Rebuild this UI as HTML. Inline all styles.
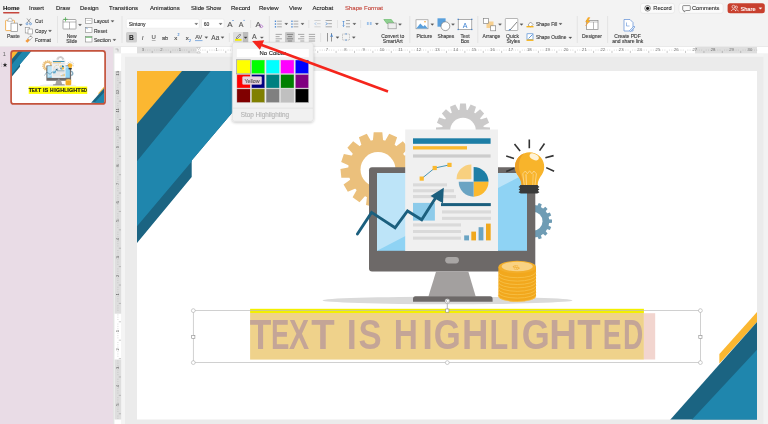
<!DOCTYPE html>
<html><head><meta charset="utf-8">
<style>
*{margin:0;padding:0;box-sizing:border-box}
html,body{width:768px;height:424px;overflow:hidden;background:#f3f3f3;font-family:"Liberation Sans",sans-serif}
svg{position:absolute;left:0;top:0;will-change:transform}
svg text{font-family:"Liberation Sans",sans-serif}
</style></head><body>
<svg width="768" height="424" viewBox="0 0 768 424">
<defs>
<filter id="sh" x="-20%" y="-20%" width="140%" height="140%"><feGaussianBlur in="SourceAlpha" stdDeviation="1.5"/><feOffset dy="1"/><feComponentTransfer><feFuncA type="linear" slope="0.25"/></feComponentTransfer><feMerge><feMergeNode/><feMergeNode in="SourceGraphic"/></feMerge></filter>
<clipPath id="slideclip"><rect x="137" y="71" width="620" height="348.5"/></clipPath>
</defs>
<rect x="0" y="0" width="768" height="46.3" fill="#f3f3f3"/>
<line x1="0" y1="46.5" x2="768" y2="46.5" stroke="#e0e0e0" stroke-width="0.6"/>
<text x="3" y="10" font-size="6" fill="#222" stroke="#222" stroke-width="0.12" font-weight="bold" text-anchor="start" >Home</text>
<text x="29" y="10" font-size="6" fill="#222" stroke="#222" stroke-width="0.12" font-weight="normal" text-anchor="start" >Insert</text>
<text x="56" y="10" font-size="6" fill="#222" stroke="#222" stroke-width="0.12" font-weight="normal" text-anchor="start" >Draw</text>
<text x="80" y="10" font-size="6" fill="#222" stroke="#222" stroke-width="0.12" font-weight="normal" text-anchor="start" >Design</text>
<text x="109" y="10" font-size="6" fill="#222" stroke="#222" stroke-width="0.12" font-weight="normal" text-anchor="start" >Transitions</text>
<text x="150" y="10" font-size="6" fill="#222" stroke="#222" stroke-width="0.12" font-weight="normal" text-anchor="start" >Animations</text>
<text x="191" y="10" font-size="6" fill="#222" stroke="#222" stroke-width="0.12" font-weight="normal" text-anchor="start" >Slide Show</text>
<text x="231" y="10" font-size="6" fill="#222" stroke="#222" stroke-width="0.12" font-weight="normal" text-anchor="start" >Record</text>
<text x="259" y="10" font-size="6" fill="#222" stroke="#222" stroke-width="0.12" font-weight="normal" text-anchor="start" >Review</text>
<text x="289" y="10" font-size="6" fill="#222" stroke="#222" stroke-width="0.12" font-weight="normal" text-anchor="start" >View</text>
<text x="312.5" y="10" font-size="6" fill="#222" stroke="#222" stroke-width="0.12" font-weight="normal" text-anchor="start" >Acrobat</text>
<text x="345" y="10" font-size="6" fill="#c4453a" stroke="#c4453a" stroke-width="0.12" font-weight="normal" text-anchor="start" >Shape Format</text>
<rect x="3" y="12" width="16.5" height="1.4" rx="0.7" fill="#c6463d"/>
<rect x="640.5" y="3.3" width="34" height="10" rx="2.5" fill="#fbfbfb" stroke="#dedede" stroke-width="0.5"/>
<circle cx="647.6" cy="8.3" r="2.8" fill="none" stroke="#333" stroke-width="0.6"/><circle cx="647.6" cy="8.3" r="1.6" fill="#111"/>
<text x="653.3" y="10.4" font-size="5.7" fill="#333" stroke="#333" stroke-width="0.12" font-weight="normal" text-anchor="start" >Record</text>
<rect x="679" y="3.3" width="44.2" height="10" rx="2.5" fill="#fbfbfb" stroke="#dedede" stroke-width="0.5"/>
<path d="M683.5,5.6 h6 a0.8,0.8 0 0 1 0.8,0.8 v3.3 a0.8,0.8 0 0 1 -0.8,0.8 h-3.6 l-1.8,1.5 v-1.5 h-0.6 a0.8,0.8 0 0 1 -0.8,-0.8 v-3.3 a0.8,0.8 0 0 1 0.8,-0.8 z" fill="none" stroke="#444" stroke-width="0.6"/>
<text x="691.9" y="10.4" font-size="5.7" fill="#333" stroke="#333" stroke-width="0.12" font-weight="normal" text-anchor="start" >Comments</text>
<rect x="727.6" y="3.3" width="37.2" height="10" rx="2.5" fill="#c8402e"/>
<circle cx="733.5" cy="6.8" r="1.5" fill="none" stroke="#fff" stroke-width="0.6"/><circle cx="736.3" cy="7.2" r="1.2" fill="none" stroke="#fff" stroke-width="0.6"/><path d="M731,11 q2.5,-3.4 5,0 M735,11 q1.8,-2.6 3.6,0" fill="none" stroke="#fff" stroke-width="0.6"/>
<text x="740.4" y="10.6" font-size="5.7" fill="#fff" stroke="#fff" stroke-width="0.12" font-weight="normal" text-anchor="start" >Share</text>
<polygon points="758.9,7.7 761.9,7.7 760.4,9.3" fill="#fff" stroke="#fff" stroke-width="0.3" stroke-linejoin="round"/>
<rect x="5.6" y="20.3" width="8.8" height="10.3" rx="0.6" fill="#fff" stroke="#f2b25a" stroke-width="1"/>
<path d="M7.6,21.3 l1.2,-3 h2.6 l1.2,3 z" fill="#fff" stroke="#999" stroke-width="0.6"/>
<rect x="11" y="23.1" width="6.4" height="8.4" fill="#fff" stroke="#8a8a8a" stroke-width="0.7"/>
<polygon points="19.2,24.3 22.2,24.3 20.7,25.9" fill="#555" stroke="#555" stroke-width="0.3" stroke-linejoin="round"/>
<text x="6.9" y="38.3" font-size="5" fill="#3a3a3a" stroke="#3a3a3a" stroke-width="0.12" font-weight="normal" text-anchor="start" >Paste</text>
<path d="M27,18.5 l3.5,4.5 M30.5,18.5 l-3.5,4.5" stroke="#666" stroke-width="0.6"/><circle cx="27" cy="23.8" r="1" fill="none" stroke="#3a7fd0" stroke-width="0.6"/><circle cx="30.5" cy="23.8" r="1" fill="none" stroke="#3a7fd0" stroke-width="0.6"/>
<text x="35" y="23.2" font-size="5" fill="#3a3a3a" stroke="#3a3a3a" stroke-width="0.12" font-weight="normal" text-anchor="start" >Cut</text>
<rect x="25.2" y="27.5" width="4.5" height="5.5" fill="#fff" stroke="#777" stroke-width="0.5"/><rect x="28" y="29" width="4.5" height="5" fill="#fff" stroke="#777" stroke-width="0.5"/>
<text x="35" y="32.5" font-size="5" fill="#3a3a3a" stroke="#3a3a3a" stroke-width="0.12" font-weight="normal" text-anchor="start" >Copy</text>
<polygon points="48.5,30.3 51.5,30.3 50,31.9" fill="#555" stroke="#555" stroke-width="0.3" stroke-linejoin="round"/>
<polygon points="25.4,41 27.3,42.8 29.8,40.2 28,38.4" fill="#f39a3c"/><polygon points="28,38.4 29.8,40.2 32.4,37.2 31.2,36 30.6,37 30.6,35.8 29.6,36.6" fill="#fff" stroke="#666" stroke-width="0.5"/>
<text x="35" y="42" font-size="5" fill="#3a3a3a" stroke="#3a3a3a" stroke-width="0.12" font-weight="normal" text-anchor="start" >Format</text>
<line x1="57.5" y1="16" x2="57.5" y2="43" stroke="#dcdcdc" stroke-width="0.7"/>
<rect x="63" y="19.5" width="13" height="9.5" rx="0.6" fill="#fff" stroke="#8a8a8a" stroke-width="0.7"/><line x1="69.5" y1="22" x2="69.5" y2="29" stroke="#8a8a8a" stroke-width="0.6"/><line x1="63" y1="22" x2="76" y2="22" stroke="#8a8a8a" stroke-width="0.6"/>
<path d="M65.5,17.2 v4.2 M63.4,19.3 h4.2" stroke="#4cae4f" stroke-width="0.8"/>
<polygon points="78.5,24.3 81.5,24.3 80,25.9" fill="#555" stroke="#555" stroke-width="0.3" stroke-linejoin="round"/>
<text x="71.7" y="38" font-size="5" fill="#3a3a3a" stroke="#3a3a3a" stroke-width="0.12" font-weight="normal" text-anchor="middle" >New</text>
<text x="71.7" y="43.2" font-size="5" fill="#3a3a3a" stroke="#3a3a3a" stroke-width="0.12" font-weight="normal" text-anchor="middle" >Slide</text>
<rect x="85.5" y="18.5" width="6.5" height="5" fill="#fff" stroke="#888" stroke-width="0.6"/><line x1="86.5" y1="20.5" x2="91" y2="20.5" stroke="#aaa" stroke-width="0.5"/>
<text x="94" y="23.3" font-size="5" fill="#3a3a3a" stroke="#3a3a3a" stroke-width="0.12" font-weight="normal" text-anchor="start" >Layout</text>
<polygon points="111.0,20.6 114.0,20.6 112.5,22.2" fill="#555" stroke="#555" stroke-width="0.3" stroke-linejoin="round"/>
<rect x="85.5" y="27.5" width="6.5" height="5" fill="#fff" stroke="#888" stroke-width="0.6"/><path d="M86.3,27.6 l1.2,1.6" stroke="#3a7fd0" stroke-width="0.7"/>
<text x="94" y="32.6" font-size="5" fill="#3a3a3a" stroke="#3a3a3a" stroke-width="0.12" font-weight="normal" text-anchor="start" >Reset</text>
<rect x="85.5" y="36.5" width="6.5" height="5.5" fill="#fff" stroke="#888" stroke-width="0.6"/><line x1="85.5" y1="37.2" x2="92" y2="37.2" stroke="#4cae4f" stroke-width="0.9"/>
<text x="94" y="42" font-size="5" fill="#3a3a3a" stroke="#3a3a3a" stroke-width="0.12" font-weight="normal" text-anchor="start" >Section</text>
<polygon points="112.9,39.3 115.9,39.3 114.4,40.9" fill="#555" stroke="#555" stroke-width="0.3" stroke-linejoin="round"/>
<line x1="122" y1="16" x2="122" y2="43" stroke="#dcdcdc" stroke-width="0.7"/>
<rect x="126.3" y="19" width="73" height="9.2" rx="1.2" fill="#fff" stroke="#e2e2e2" stroke-width="0.5"/>
<text x="128.8" y="25.6" font-size="5" fill="#333" stroke="#333" stroke-width="0.12" font-weight="normal" text-anchor="start" >Sintony</text>
<polygon points="194.8,23.3 197.8,23.3 196.3,24.9" fill="#666" stroke="#666" stroke-width="0.3" stroke-linejoin="round"/>
<rect x="201.5" y="19" width="22.5" height="9.2" rx="1.2" fill="#fff" stroke="#e2e2e2" stroke-width="0.5"/>
<text x="203.8" y="25.6" font-size="5" fill="#333" stroke="#333" stroke-width="0.12" font-weight="normal" text-anchor="start" >60</text>
<polygon points="219.1,23.3 222.1,23.3 220.6,24.9" fill="#666" stroke="#666" stroke-width="0.3" stroke-linejoin="round"/>
<text x="227.2" y="26.5" font-size="8" fill="#555" stroke="#555" stroke-width="0.12" font-weight="normal" text-anchor="start" >A</text>
<path d="M232,21 l1,-1 l1,1" stroke="#3a7fd0" stroke-width="0.5" fill="none"/>
<text x="238.7" y="26.5" font-size="7" fill="#555" stroke="#555" stroke-width="0.12" font-weight="normal" text-anchor="start" >A</text>
<path d="M243.2,20.4 h1.8" stroke="#3a7fd0" stroke-width="0.5"/>
<line x1="250.6" y1="20" x2="250.6" y2="28" stroke="#dcdcdc" stroke-width="0.7"/>
<text x="255.6" y="26.5" font-size="8" fill="#555" stroke="#555" stroke-width="0.12" font-weight="normal" text-anchor="start" >A</text>
<path d="M259.5,25 q2,-1 3.5,1.5 q-1.5,2 -3.5,0.5" fill="none" stroke="#a040c0" stroke-width="0.6"/>
<line x1="269.4" y1="16" x2="269.4" y2="43" stroke="#dcdcdc" stroke-width="0.7"/>
<rect x="126" y="32" width="11" height="10.6" rx="1.5" fill="#cfcfcf"/>
<text x="131.5" y="40" font-size="6.6" fill="#2a2a2a" stroke="#2a2a2a" stroke-width="0.12" font-weight="bold" text-anchor="middle" >B</text>
<text x="142.5" y="39.7" font-size="6" fill="#555" stroke="#555" stroke-width="0.12" font-weight="normal" text-anchor="middle" font-style="italic">I</text>
<text x="153.7" y="39.4" font-size="6" fill="#555" stroke="#555" stroke-width="0.12" font-weight="normal" text-anchor="middle" >U</text>
<line x1="151.8" y1="40.5" x2="155.6" y2="40.5" stroke="#555" stroke-width="0.4"/>
<text x="165" y="39.7" font-size="5.5" fill="#555" stroke="#555" stroke-width="0.12" font-weight="normal" text-anchor="middle" >ab</text>
<line x1="162" y1="37.6" x2="168" y2="37.6" stroke="#555" stroke-width="0.4"/>
<text x="175.8" y="39.7" font-size="6" fill="#333" stroke="#333" stroke-width="0.12" font-weight="normal" text-anchor="middle" >x</text>
<text x="178.5" y="36" font-size="3.5" fill="#3a7fd0" stroke="#3a7fd0" stroke-width="0.12" font-weight="normal" text-anchor="middle" >2</text>
<text x="187.3" y="39.7" font-size="6" fill="#333" stroke="#333" stroke-width="0.12" font-weight="normal" text-anchor="middle" >x</text>
<text x="190" y="41.5" font-size="3.5" fill="#3a7fd0" stroke="#3a7fd0" stroke-width="0.12" font-weight="normal" text-anchor="middle" >2</text>
<text x="198.6" y="38.5" font-size="5.5" fill="#555" stroke="#555" stroke-width="0.12" font-weight="normal" text-anchor="middle" >AV</text>
<path d="M195,40.6 h7.5" stroke="#3a7fd0" stroke-width="0.6"/>
<polygon points="204.8,36.8 207.8,36.8 206.3,38.4" fill="#555" stroke="#555" stroke-width="0.3" stroke-linejoin="round"/>
<text x="215.3" y="39.7" font-size="6.5" fill="#555" stroke="#555" stroke-width="0.12" font-weight="normal" text-anchor="middle" >Aa</text>
<polygon points="221.0,36.8 224.0,36.8 222.5,38.4" fill="#555" stroke="#555" stroke-width="0.3" stroke-linejoin="round"/>
<line x1="229.4" y1="33" x2="229.4" y2="42" stroke="#dcdcdc" stroke-width="0.7"/>
<rect x="233" y="32" width="15.2" height="10.6" rx="1.3" fill="#dedede"/>
<rect x="243" y="32" width="5.2" height="10.6" fill="#bdbdbd"/>
<path d="M236,38 l3.8,-4 l1,1 l-3.8,4 z" fill="none" stroke="#555" stroke-width="0.6"/>
<rect x="235" y="38.9" width="6.5" height="1.9" fill="#f5ef00"/>
<polygon points="244.1,36.9 247.1,36.9 245.6,38.5" fill="#3a3a3a" stroke="#3a3a3a" stroke-width="0.3" stroke-linejoin="round"/>
<text x="254.4" y="39.2" font-size="7" fill="#555" stroke="#555" stroke-width="0.12" font-weight="normal" text-anchor="middle" >A</text>
<polygon points="260.4,36.9 263.4,36.9 261.9,38.5" fill="#555" stroke="#555" stroke-width="0.3" stroke-linejoin="round"/>
<rect x="274.8" y="20.599999999999998" width="1.3" height="1.3" fill="#3a7fd0"/><line x1="277.1" y1="21.2" x2="281.8" y2="21.2" stroke="#777" stroke-width="0.6"/><rect x="274.8" y="23.4" width="1.3" height="1.3" fill="#3a7fd0"/><line x1="277.1" y1="24.0" x2="281.8" y2="24.0" stroke="#777" stroke-width="0.6"/><rect x="274.8" y="26.199999999999996" width="1.3" height="1.3" fill="#3a7fd0"/><line x1="277.1" y1="26.799999999999997" x2="281.8" y2="26.799999999999997" stroke="#777" stroke-width="0.6"/>
<polygon points="284.8,23.3 287.8,23.3 286.3,24.9" fill="#555" stroke="#555" stroke-width="0.3" stroke-linejoin="round"/>
<rect x="291.3" y="20.599999999999998" width="1.3" height="1.3" fill="#3a7fd0"/><line x1="293.6" y1="21.2" x2="298.3" y2="21.2" stroke="#777" stroke-width="0.6"/><rect x="291.3" y="23.4" width="1.3" height="1.3" fill="#3a7fd0"/><line x1="293.6" y1="24.0" x2="298.3" y2="24.0" stroke="#777" stroke-width="0.6"/><rect x="291.3" y="26.199999999999996" width="1.3" height="1.3" fill="#3a7fd0"/><line x1="293.6" y1="26.799999999999997" x2="298.3" y2="26.799999999999997" stroke="#777" stroke-width="0.6"/>
<polygon points="301.0,23.3 304.0,23.3 302.5,24.9" fill="#555" stroke="#555" stroke-width="0.3" stroke-linejoin="round"/>
<line x1="308.8" y1="20" x2="308.8" y2="28" stroke="#dcdcdc" stroke-width="0.7"/>
<g stroke="#bbb" stroke-width="0.6"><line x1="314.4" y1="20.5" x2="320.6" y2="20.5"/><line x1="317" y1="23.7" x2="320.6" y2="23.7"/><line x1="314.4" y1="26.8" x2="320.6" y2="26.8"/></g><path d="M316.5,22.5 l-2,1.2 l2,1.2" fill="none" stroke="#9cc0e8" stroke-width="0.6"/>
<g stroke="#777" stroke-width="0.6"><line x1="325.6" y1="20.5" x2="331.9" y2="20.5"/><line x1="328.2" y1="23.7" x2="331.9" y2="23.7"/><line x1="325.6" y1="26.8" x2="331.9" y2="26.8"/></g><path d="M325.6,22.5 l2,1.2 l-2,1.2" fill="none" stroke="#3a7fd0" stroke-width="0.6"/>
<line x1="337.5" y1="20" x2="337.5" y2="28" stroke="#dcdcdc" stroke-width="0.7"/>
<g stroke="#777" stroke-width="0.6"><line x1="346" y1="20.5" x2="350" y2="20.5"/><line x1="346" y1="23.7" x2="350" y2="23.7"/><line x1="346" y1="26.8" x2="350" y2="26.8"/></g><path d="M343.5,21 v5.5 M342.6,22 l0.9,-1 l0.9,1 M342.6,25.5 l0.9,1 l0.9,-1" fill="none" stroke="#3a7fd0" stroke-width="0.6"/>
<polygon points="352.9,23.3 355.9,23.3 354.4,24.9" fill="#555" stroke="#555" stroke-width="0.3" stroke-linejoin="round"/>
<line x1="360.6" y1="20" x2="360.6" y2="28" stroke="#dcdcdc" stroke-width="0.7"/>
<rect x="366.9" y="22" width="1.8" height="3" fill="#9cc0e8"/><rect x="369.8" y="22" width="1.8" height="3" fill="#9cc0e8"/>
<polygon points="375.4,23.3 378.4,23.3 376.9,24.9" fill="#555" stroke="#555" stroke-width="0.3" stroke-linejoin="round"/>
<line x1="275.6" y1="34.4" x2="281.90000000000003" y2="34.4" stroke="#777" stroke-width="0.6"/><line x1="275.6" y1="36.6" x2="279.6" y2="36.6" stroke="#777" stroke-width="0.6"/><line x1="275.6" y1="38.8" x2="281.90000000000003" y2="38.8" stroke="#777" stroke-width="0.6"/><line x1="275.6" y1="41.0" x2="279.6" y2="41.0" stroke="#777" stroke-width="0.6"/>
<rect x="285" y="32" width="9.8" height="10.6" rx="1.3" fill="#c9c9c9"/>
<line x1="286.8" y1="34.4" x2="293.1" y2="34.4" stroke="#555" stroke-width="0.6"/><line x1="287.8" y1="36.6" x2="292.1" y2="36.6" stroke="#555" stroke-width="0.6"/><line x1="286.8" y1="38.8" x2="293.1" y2="38.8" stroke="#555" stroke-width="0.6"/><line x1="287.8" y1="41.0" x2="292.1" y2="41.0" stroke="#555" stroke-width="0.6"/>
<line x1="298" y1="34.4" x2="304.3" y2="34.4" stroke="#777" stroke-width="0.6"/><line x1="300.3" y1="36.6" x2="304.3" y2="36.6" stroke="#777" stroke-width="0.6"/><line x1="298" y1="38.8" x2="304.3" y2="38.8" stroke="#777" stroke-width="0.6"/><line x1="300.3" y1="41.0" x2="304.3" y2="41.0" stroke="#777" stroke-width="0.6"/>
<line x1="308.8" y1="34.4" x2="315.1" y2="34.4" stroke="#777" stroke-width="0.6"/><line x1="308.8" y1="36.6" x2="315.1" y2="36.6" stroke="#777" stroke-width="0.6"/><line x1="308.8" y1="38.8" x2="315.1" y2="38.8" stroke="#777" stroke-width="0.6"/><line x1="308.8" y1="41.0" x2="315.1" y2="41.0" stroke="#777" stroke-width="0.6"/>
<line x1="320.6" y1="33" x2="320.6" y2="42" stroke="#dcdcdc" stroke-width="0.7"/>
<path d="M327.5,33 v8.5 M331.5,33 v8.5" stroke="#555" stroke-width="0.6"/><text x="331.5" y="37" font-size="4" fill="#3a7fd0" text-anchor="middle">A</text>
<polygon points="336.0,36.8 339.0,36.8 337.5,38.4" fill="#555" stroke="#555" stroke-width="0.3" stroke-linejoin="round"/>
<rect x="342.5" y="34" width="7" height="6" fill="none" stroke="#888" stroke-width="0.5" stroke-dasharray="1,0.7"/><path d="M346,33 v1.8 M346,39.2 v1.8" stroke="#3a7fd0" stroke-width="0.7"/>
<polygon points="352.3,36.8 355.3,36.8 353.8,38.4" fill="#555" stroke="#555" stroke-width="0.3" stroke-linejoin="round"/>
<path d="M383.8,19.5 h7.5 l3,4 h-7.5 z" fill="#8ed08f" stroke="#4cae4f" stroke-width="0.5"/>
<rect x="388" y="23" width="8.2" height="5.8" fill="#eee" stroke="#888" stroke-width="0.6"/>
<polygon points="398.5,23.8 401.5,23.8 400,25.4" fill="#555" stroke="#555" stroke-width="0.3" stroke-linejoin="round"/>
<text x="392.7" y="37.7" font-size="5" fill="#3a3a3a" stroke="#3a3a3a" stroke-width="0.12" font-weight="normal" text-anchor="middle" >Convert to</text>
<text x="392.7" y="43" font-size="5" fill="#3a3a3a" stroke="#3a3a3a" stroke-width="0.12" font-weight="normal" text-anchor="middle" >SmartArt</text>
<line x1="409.8" y1="16" x2="409.8" y2="43" stroke="#dcdcdc" stroke-width="0.7"/>
<rect x="416" y="19.8" width="12" height="9" fill="#fff" stroke="#888" stroke-width="0.6"/><path d="M416.3,28.5 l4,-5 l3,3 l1.5,-1.5 l3,3.5 z" fill="#5aa0dc"/><circle cx="425" cy="21.8" r="0.8" fill="#f0a030"/>
<polygon points="430.8,23.8 433.8,23.8 432.3,25.4" fill="#555" stroke="#555" stroke-width="0.3" stroke-linejoin="round"/>
<text x="424.4" y="37.7" font-size="5" fill="#3a3a3a" stroke="#3a3a3a" stroke-width="0.12" font-weight="normal" text-anchor="middle" >Picture</text>
<rect x="437.5" y="18.3" width="8.1" height="8.4" fill="#5aa0dc"/><circle cx="445.4" cy="26.2" r="4.4" fill="#fff" stroke="#666" stroke-width="0.6"/>
<polygon points="451.5,23.8 454.5,23.8 453,25.4" fill="#555" stroke="#555" stroke-width="0.3" stroke-linejoin="round"/>
<text x="445.9" y="37.7" font-size="5" fill="#3a3a3a" stroke="#3a3a3a" stroke-width="0.12" font-weight="normal" text-anchor="middle" >Shapes</text>
<rect x="458.2" y="19.3" width="13.6" height="10.2" fill="#fff" stroke="#777" stroke-width="0.6"/><text x="465" y="27.5" font-size="7" fill="#3a7fd0" text-anchor="middle">A</text>
<g fill="#3a7fd0"><rect x="457.6" y="18.7" width="1.2" height="1.2"/><rect x="471.2" y="18.7" width="1.2" height="1.2"/><rect x="457.6" y="28.9" width="1.2" height="1.2"/><rect x="471.2" y="28.9" width="1.2" height="1.2"/></g>
<text x="465" y="37.7" font-size="5" fill="#3a3a3a" stroke="#3a3a3a" stroke-width="0.12" font-weight="normal" text-anchor="middle" >Text</text>
<text x="465" y="43" font-size="5" fill="#3a3a3a" stroke="#3a3a3a" stroke-width="0.12" font-weight="normal" text-anchor="middle" >Box</text>
<line x1="477.8" y1="16" x2="477.8" y2="43" stroke="#dcdcdc" stroke-width="0.7"/>
<rect x="486.5" y="21.5" width="7" height="6.5" fill="#f7d08f"/><rect x="483.3" y="18.5" width="5" height="5" fill="#fff" stroke="#777" stroke-width="0.6"/><rect x="490.7" y="25.8" width="5" height="5" fill="#fff" stroke="#777" stroke-width="0.6"/>
<polygon points="498.5,23.8 501.5,23.8 500,25.4" fill="#555" stroke="#555" stroke-width="0.3" stroke-linejoin="round"/>
<text x="491.5" y="37.7" font-size="5" fill="#3a3a3a" stroke="#3a3a3a" stroke-width="0.12" font-weight="normal" text-anchor="middle" >Arrange</text>
<rect x="505.3" y="18.5" width="12.5" height="12" rx="0.8" fill="#fff" stroke="#888" stroke-width="0.6"/><path d="M510,30 l7,-8" stroke="#666" stroke-width="0.8"/><path d="M508.5,30.5 q0.5,-2 2.2,-1.5 q-0.2,1.5 -2.2,1.5z" fill="#3a7fd0"/>
<polygon points="520.0,23.8 523.0,23.8 521.5,25.4" fill="#555" stroke="#555" stroke-width="0.3" stroke-linejoin="round"/>
<text x="512.5" y="37.7" font-size="5" fill="#3a3a3a" stroke="#3a3a3a" stroke-width="0.12" font-weight="normal" text-anchor="middle" >Quick</text>
<text x="513.3" y="43" font-size="5" fill="#3a3a3a" stroke="#3a3a3a" stroke-width="0.12" font-weight="normal" text-anchor="middle" >Styles</text>
<path d="M528,25 l2.5,-3 l2.5,2.5 l-2.5,2.5 z" fill="#fff" stroke="#555" stroke-width="0.5"/><rect x="526.5" y="26" width="7" height="1.4" fill="#f6b31b"/>
<text x="536" y="25.7" font-size="4.8" fill="#3a3a3a" stroke="#3a3a3a" stroke-width="0.12" font-weight="normal" text-anchor="start" >Shape Fill</text>
<polygon points="559.0,23.3 562.0,23.3 560.5,24.9" fill="#555" stroke="#555" stroke-width="0.3" stroke-linejoin="round"/>
<rect x="527" y="33.8" width="6" height="5.5" fill="#fff" stroke="#3a7fd0" stroke-width="0.6"/><path d="M528.5,38.5 l4,-4" stroke="#3a7fd0" stroke-width="0.8"/><rect x="526.5" y="39.5" width="7" height="1.4" fill="#f6b31b"/>
<text x="536" y="39.4" font-size="4.8" fill="#3a3a3a" stroke="#3a3a3a" stroke-width="0.12" font-weight="normal" text-anchor="start" >Shape Outline</text>
<polygon points="568.8,37.099999999999994 571.8,37.099999999999994 570.3,38.699999999999996" fill="#555" stroke="#555" stroke-width="0.3" stroke-linejoin="round"/>
<line x1="577.3" y1="16" x2="577.3" y2="43" stroke="#dcdcdc" stroke-width="0.7"/>
<rect x="586.5" y="20.5" width="11.5" height="9" fill="#fff" stroke="#888" stroke-width="0.7"/><line x1="593.5" y1="22" x2="593.5" y2="29" stroke="#888" stroke-width="0.6"/><line x1="586.5" y1="22" x2="598" y2="22" stroke="#888" stroke-width="0.5"/>
<path d="M588,17.5 l-2.5,4.5 h2 l-2,4 l4.5,-5 h-2 l2,-3.5 z" fill="#f6b31b" stroke="#f08a3c" stroke-width="0.3"/>
<text x="592" y="37.7" font-size="5" fill="#3a3a3a" stroke="#3a3a3a" stroke-width="0.12" font-weight="normal" text-anchor="middle" >Designer</text>
<line x1="607.6" y1="16" x2="607.6" y2="43" stroke="#dcdcdc" stroke-width="0.7"/>
<path d="M624,19.5 h6 l3,3 v8.5 h-9 z" fill="#fff" stroke="#5b8dd6" stroke-width="0.7"/><path d="M626.5,22.5 v3.5 h3" fill="none" stroke="#5b8dd6" stroke-width="0.6"/><path d="M629.5,30.5 l4.5,-4.5 l1,1 l-4.5,4.5 z" fill="#dfe9f7" stroke="#5b8dd6" stroke-width="0.6"/>
<text x="627.5" y="37.7" font-size="5" fill="#3a3a3a" stroke="#3a3a3a" stroke-width="0.12" font-weight="normal" text-anchor="middle" >Create PDF</text>
<text x="627.8" y="43" font-size="5" fill="#3a3a3a" stroke="#3a3a3a" stroke-width="0.12" font-weight="normal" text-anchor="middle" >and share link</text>
<rect x="0" y="46.8" width="113" height="378" fill="#e9dce6"/>
<rect x="113" y="46.8" width="1.6" height="378" fill="#e4e4e4"/>
<rect x="114.6" y="46.8" width="654" height="378" fill="#ebebeb"/>
<rect x="121.2" y="53.4" width="647" height="3.4" fill="#f4f4f4"/>
<rect x="121.2" y="53.4" width="3.8" height="371" fill="#f4f4f4"/>
<rect x="763.4" y="53.4" width="5" height="371" fill="#f2f2f2"/>
<rect x="121" y="47" width="647" height="6.4" fill="#fff"/>
<rect x="137" y="47" width="59.7" height="6.4" fill="#dedede"/>
<rect x="695" y="47" width="62" height="6.4" fill="#dedede"/>
<text x="143.03" y="50.7" font-size="4.2" fill="#6a6a6a" text-anchor="middle">3</text>
<line x1="145.33" y1="49.6" x2="145.33" y2="50.6" stroke="#aaa" stroke-width="0.45"/>
<line x1="147.63" y1="49.6" x2="147.63" y2="50.6" stroke="#aaa" stroke-width="0.45"/>
<line x1="149.93" y1="49.6" x2="149.93" y2="50.6" stroke="#aaa" stroke-width="0.45"/>
<line x1="152.22" y1="50.8" x2="152.22" y2="53" stroke="#888" stroke-width="0.45"/>
<line x1="154.52" y1="49.6" x2="154.52" y2="50.6" stroke="#aaa" stroke-width="0.45"/>
<line x1="156.82" y1="49.6" x2="156.82" y2="50.6" stroke="#aaa" stroke-width="0.45"/>
<line x1="159.12" y1="49.6" x2="159.12" y2="50.6" stroke="#aaa" stroke-width="0.45"/>
<text x="161.42" y="50.7" font-size="4.2" fill="#6a6a6a" text-anchor="middle">2</text>
<line x1="163.72" y1="49.6" x2="163.72" y2="50.6" stroke="#aaa" stroke-width="0.45"/>
<line x1="166.02" y1="49.6" x2="166.02" y2="50.6" stroke="#aaa" stroke-width="0.45"/>
<line x1="168.32" y1="49.6" x2="168.32" y2="50.6" stroke="#aaa" stroke-width="0.45"/>
<line x1="170.61" y1="50.8" x2="170.61" y2="53" stroke="#888" stroke-width="0.45"/>
<line x1="172.91" y1="49.6" x2="172.91" y2="50.6" stroke="#aaa" stroke-width="0.45"/>
<line x1="175.21" y1="49.6" x2="175.21" y2="50.6" stroke="#aaa" stroke-width="0.45"/>
<line x1="177.51" y1="49.6" x2="177.51" y2="50.6" stroke="#aaa" stroke-width="0.45"/>
<text x="179.81" y="50.7" font-size="4.2" fill="#6a6a6a" text-anchor="middle">1</text>
<line x1="182.11" y1="49.6" x2="182.11" y2="50.6" stroke="#aaa" stroke-width="0.45"/>
<line x1="184.41" y1="49.6" x2="184.41" y2="50.6" stroke="#aaa" stroke-width="0.45"/>
<line x1="186.71" y1="49.6" x2="186.71" y2="50.6" stroke="#aaa" stroke-width="0.45"/>
<line x1="189.00" y1="50.8" x2="189.00" y2="53" stroke="#888" stroke-width="0.45"/>
<line x1="191.30" y1="49.6" x2="191.30" y2="50.6" stroke="#aaa" stroke-width="0.45"/>
<line x1="193.60" y1="49.6" x2="193.60" y2="50.6" stroke="#aaa" stroke-width="0.45"/>
<line x1="195.90" y1="49.6" x2="195.90" y2="50.6" stroke="#aaa" stroke-width="0.45"/>
<line x1="200.50" y1="49.6" x2="200.50" y2="50.6" stroke="#aaa" stroke-width="0.45"/>
<line x1="202.80" y1="49.6" x2="202.80" y2="50.6" stroke="#aaa" stroke-width="0.45"/>
<line x1="205.10" y1="49.6" x2="205.10" y2="50.6" stroke="#aaa" stroke-width="0.45"/>
<line x1="207.39" y1="50.8" x2="207.39" y2="53" stroke="#888" stroke-width="0.45"/>
<line x1="209.69" y1="49.6" x2="209.69" y2="50.6" stroke="#aaa" stroke-width="0.45"/>
<line x1="211.99" y1="49.6" x2="211.99" y2="50.6" stroke="#aaa" stroke-width="0.45"/>
<line x1="214.29" y1="49.6" x2="214.29" y2="50.6" stroke="#aaa" stroke-width="0.45"/>
<text x="216.59" y="50.7" font-size="4.2" fill="#6a6a6a" text-anchor="middle">1</text>
<line x1="218.89" y1="49.6" x2="218.89" y2="50.6" stroke="#aaa" stroke-width="0.45"/>
<line x1="221.19" y1="49.6" x2="221.19" y2="50.6" stroke="#aaa" stroke-width="0.45"/>
<line x1="223.49" y1="49.6" x2="223.49" y2="50.6" stroke="#aaa" stroke-width="0.45"/>
<line x1="225.78" y1="50.8" x2="225.78" y2="53" stroke="#888" stroke-width="0.45"/>
<line x1="228.08" y1="49.6" x2="228.08" y2="50.6" stroke="#aaa" stroke-width="0.45"/>
<line x1="230.38" y1="49.6" x2="230.38" y2="50.6" stroke="#aaa" stroke-width="0.45"/>
<line x1="232.68" y1="49.6" x2="232.68" y2="50.6" stroke="#aaa" stroke-width="0.45"/>
<text x="234.98" y="50.7" font-size="4.2" fill="#6a6a6a" text-anchor="middle">2</text>
<line x1="237.28" y1="49.6" x2="237.28" y2="50.6" stroke="#aaa" stroke-width="0.45"/>
<line x1="239.58" y1="49.6" x2="239.58" y2="50.6" stroke="#aaa" stroke-width="0.45"/>
<line x1="241.88" y1="49.6" x2="241.88" y2="50.6" stroke="#aaa" stroke-width="0.45"/>
<line x1="244.17" y1="50.8" x2="244.17" y2="53" stroke="#888" stroke-width="0.45"/>
<line x1="246.47" y1="49.6" x2="246.47" y2="50.6" stroke="#aaa" stroke-width="0.45"/>
<line x1="248.77" y1="49.6" x2="248.77" y2="50.6" stroke="#aaa" stroke-width="0.45"/>
<line x1="251.07" y1="49.6" x2="251.07" y2="50.6" stroke="#aaa" stroke-width="0.45"/>
<text x="253.37" y="50.7" font-size="4.2" fill="#6a6a6a" text-anchor="middle">3</text>
<line x1="255.67" y1="49.6" x2="255.67" y2="50.6" stroke="#aaa" stroke-width="0.45"/>
<line x1="257.97" y1="49.6" x2="257.97" y2="50.6" stroke="#aaa" stroke-width="0.45"/>
<line x1="260.27" y1="49.6" x2="260.27" y2="50.6" stroke="#aaa" stroke-width="0.45"/>
<line x1="262.56" y1="50.8" x2="262.56" y2="53" stroke="#888" stroke-width="0.45"/>
<line x1="264.86" y1="49.6" x2="264.86" y2="50.6" stroke="#aaa" stroke-width="0.45"/>
<line x1="267.16" y1="49.6" x2="267.16" y2="50.6" stroke="#aaa" stroke-width="0.45"/>
<line x1="269.46" y1="49.6" x2="269.46" y2="50.6" stroke="#aaa" stroke-width="0.45"/>
<text x="271.76" y="50.7" font-size="4.2" fill="#6a6a6a" text-anchor="middle">4</text>
<line x1="274.06" y1="49.6" x2="274.06" y2="50.6" stroke="#aaa" stroke-width="0.45"/>
<line x1="276.36" y1="49.6" x2="276.36" y2="50.6" stroke="#aaa" stroke-width="0.45"/>
<line x1="278.66" y1="49.6" x2="278.66" y2="50.6" stroke="#aaa" stroke-width="0.45"/>
<line x1="280.95" y1="50.8" x2="280.95" y2="53" stroke="#888" stroke-width="0.45"/>
<line x1="283.25" y1="49.6" x2="283.25" y2="50.6" stroke="#aaa" stroke-width="0.45"/>
<line x1="285.55" y1="49.6" x2="285.55" y2="50.6" stroke="#aaa" stroke-width="0.45"/>
<line x1="287.85" y1="49.6" x2="287.85" y2="50.6" stroke="#aaa" stroke-width="0.45"/>
<text x="290.15" y="50.7" font-size="4.2" fill="#6a6a6a" text-anchor="middle">5</text>
<line x1="292.45" y1="49.6" x2="292.45" y2="50.6" stroke="#aaa" stroke-width="0.45"/>
<line x1="294.75" y1="49.6" x2="294.75" y2="50.6" stroke="#aaa" stroke-width="0.45"/>
<line x1="297.05" y1="49.6" x2="297.05" y2="50.6" stroke="#aaa" stroke-width="0.45"/>
<line x1="299.34" y1="50.8" x2="299.34" y2="53" stroke="#888" stroke-width="0.45"/>
<line x1="301.64" y1="49.6" x2="301.64" y2="50.6" stroke="#aaa" stroke-width="0.45"/>
<line x1="303.94" y1="49.6" x2="303.94" y2="50.6" stroke="#aaa" stroke-width="0.45"/>
<line x1="306.24" y1="49.6" x2="306.24" y2="50.6" stroke="#aaa" stroke-width="0.45"/>
<text x="308.54" y="50.7" font-size="4.2" fill="#6a6a6a" text-anchor="middle">6</text>
<line x1="310.84" y1="49.6" x2="310.84" y2="50.6" stroke="#aaa" stroke-width="0.45"/>
<line x1="313.14" y1="49.6" x2="313.14" y2="50.6" stroke="#aaa" stroke-width="0.45"/>
<line x1="315.44" y1="49.6" x2="315.44" y2="50.6" stroke="#aaa" stroke-width="0.45"/>
<line x1="317.73" y1="50.8" x2="317.73" y2="53" stroke="#888" stroke-width="0.45"/>
<line x1="320.03" y1="49.6" x2="320.03" y2="50.6" stroke="#aaa" stroke-width="0.45"/>
<line x1="322.33" y1="49.6" x2="322.33" y2="50.6" stroke="#aaa" stroke-width="0.45"/>
<line x1="324.63" y1="49.6" x2="324.63" y2="50.6" stroke="#aaa" stroke-width="0.45"/>
<text x="326.93" y="50.7" font-size="4.2" fill="#6a6a6a" text-anchor="middle">7</text>
<line x1="329.23" y1="49.6" x2="329.23" y2="50.6" stroke="#aaa" stroke-width="0.45"/>
<line x1="331.53" y1="49.6" x2="331.53" y2="50.6" stroke="#aaa" stroke-width="0.45"/>
<line x1="333.83" y1="49.6" x2="333.83" y2="50.6" stroke="#aaa" stroke-width="0.45"/>
<line x1="336.12" y1="50.8" x2="336.12" y2="53" stroke="#888" stroke-width="0.45"/>
<line x1="338.42" y1="49.6" x2="338.42" y2="50.6" stroke="#aaa" stroke-width="0.45"/>
<line x1="340.72" y1="49.6" x2="340.72" y2="50.6" stroke="#aaa" stroke-width="0.45"/>
<line x1="343.02" y1="49.6" x2="343.02" y2="50.6" stroke="#aaa" stroke-width="0.45"/>
<text x="345.32" y="50.7" font-size="4.2" fill="#6a6a6a" text-anchor="middle">8</text>
<line x1="347.62" y1="49.6" x2="347.62" y2="50.6" stroke="#aaa" stroke-width="0.45"/>
<line x1="349.92" y1="49.6" x2="349.92" y2="50.6" stroke="#aaa" stroke-width="0.45"/>
<line x1="352.22" y1="49.6" x2="352.22" y2="50.6" stroke="#aaa" stroke-width="0.45"/>
<line x1="354.51" y1="50.8" x2="354.51" y2="53" stroke="#888" stroke-width="0.45"/>
<line x1="356.81" y1="49.6" x2="356.81" y2="50.6" stroke="#aaa" stroke-width="0.45"/>
<line x1="359.11" y1="49.6" x2="359.11" y2="50.6" stroke="#aaa" stroke-width="0.45"/>
<line x1="361.41" y1="49.6" x2="361.41" y2="50.6" stroke="#aaa" stroke-width="0.45"/>
<text x="363.71" y="50.7" font-size="4.2" fill="#6a6a6a" text-anchor="middle">9</text>
<line x1="366.01" y1="49.6" x2="366.01" y2="50.6" stroke="#aaa" stroke-width="0.45"/>
<line x1="368.31" y1="49.6" x2="368.31" y2="50.6" stroke="#aaa" stroke-width="0.45"/>
<line x1="370.61" y1="49.6" x2="370.61" y2="50.6" stroke="#aaa" stroke-width="0.45"/>
<line x1="372.90" y1="50.8" x2="372.90" y2="53" stroke="#888" stroke-width="0.45"/>
<line x1="375.20" y1="49.6" x2="375.20" y2="50.6" stroke="#aaa" stroke-width="0.45"/>
<line x1="377.50" y1="49.6" x2="377.50" y2="50.6" stroke="#aaa" stroke-width="0.45"/>
<line x1="379.80" y1="49.6" x2="379.80" y2="50.6" stroke="#aaa" stroke-width="0.45"/>
<text x="382.10" y="50.7" font-size="4.2" fill="#6a6a6a" text-anchor="middle">10</text>
<line x1="384.40" y1="49.6" x2="384.40" y2="50.6" stroke="#aaa" stroke-width="0.45"/>
<line x1="386.70" y1="49.6" x2="386.70" y2="50.6" stroke="#aaa" stroke-width="0.45"/>
<line x1="389.00" y1="49.6" x2="389.00" y2="50.6" stroke="#aaa" stroke-width="0.45"/>
<line x1="391.30" y1="50.8" x2="391.30" y2="53" stroke="#888" stroke-width="0.45"/>
<line x1="393.59" y1="49.6" x2="393.59" y2="50.6" stroke="#aaa" stroke-width="0.45"/>
<line x1="395.89" y1="49.6" x2="395.89" y2="50.6" stroke="#aaa" stroke-width="0.45"/>
<line x1="398.19" y1="49.6" x2="398.19" y2="50.6" stroke="#aaa" stroke-width="0.45"/>
<text x="400.49" y="50.7" font-size="4.2" fill="#6a6a6a" text-anchor="middle">11</text>
<line x1="402.79" y1="49.6" x2="402.79" y2="50.6" stroke="#aaa" stroke-width="0.45"/>
<line x1="405.09" y1="49.6" x2="405.09" y2="50.6" stroke="#aaa" stroke-width="0.45"/>
<line x1="407.39" y1="49.6" x2="407.39" y2="50.6" stroke="#aaa" stroke-width="0.45"/>
<line x1="409.69" y1="50.8" x2="409.69" y2="53" stroke="#888" stroke-width="0.45"/>
<line x1="411.98" y1="49.6" x2="411.98" y2="50.6" stroke="#aaa" stroke-width="0.45"/>
<line x1="414.28" y1="49.6" x2="414.28" y2="50.6" stroke="#aaa" stroke-width="0.45"/>
<line x1="416.58" y1="49.6" x2="416.58" y2="50.6" stroke="#aaa" stroke-width="0.45"/>
<text x="418.88" y="50.7" font-size="4.2" fill="#6a6a6a" text-anchor="middle">12</text>
<line x1="421.18" y1="49.6" x2="421.18" y2="50.6" stroke="#aaa" stroke-width="0.45"/>
<line x1="423.48" y1="49.6" x2="423.48" y2="50.6" stroke="#aaa" stroke-width="0.45"/>
<line x1="425.78" y1="49.6" x2="425.78" y2="50.6" stroke="#aaa" stroke-width="0.45"/>
<line x1="428.07" y1="50.8" x2="428.07" y2="53" stroke="#888" stroke-width="0.45"/>
<line x1="430.37" y1="49.6" x2="430.37" y2="50.6" stroke="#aaa" stroke-width="0.45"/>
<line x1="432.67" y1="49.6" x2="432.67" y2="50.6" stroke="#aaa" stroke-width="0.45"/>
<line x1="434.97" y1="49.6" x2="434.97" y2="50.6" stroke="#aaa" stroke-width="0.45"/>
<text x="437.27" y="50.7" font-size="4.2" fill="#6a6a6a" text-anchor="middle">13</text>
<line x1="439.57" y1="49.6" x2="439.57" y2="50.6" stroke="#aaa" stroke-width="0.45"/>
<line x1="441.87" y1="49.6" x2="441.87" y2="50.6" stroke="#aaa" stroke-width="0.45"/>
<line x1="444.17" y1="49.6" x2="444.17" y2="50.6" stroke="#aaa" stroke-width="0.45"/>
<line x1="446.46" y1="50.8" x2="446.46" y2="53" stroke="#888" stroke-width="0.45"/>
<line x1="448.76" y1="49.6" x2="448.76" y2="50.6" stroke="#aaa" stroke-width="0.45"/>
<line x1="451.06" y1="49.6" x2="451.06" y2="50.6" stroke="#aaa" stroke-width="0.45"/>
<line x1="453.36" y1="49.6" x2="453.36" y2="50.6" stroke="#aaa" stroke-width="0.45"/>
<text x="455.66" y="50.7" font-size="4.2" fill="#6a6a6a" text-anchor="middle">14</text>
<line x1="457.96" y1="49.6" x2="457.96" y2="50.6" stroke="#aaa" stroke-width="0.45"/>
<line x1="460.26" y1="49.6" x2="460.26" y2="50.6" stroke="#aaa" stroke-width="0.45"/>
<line x1="462.56" y1="49.6" x2="462.56" y2="50.6" stroke="#aaa" stroke-width="0.45"/>
<line x1="464.86" y1="50.8" x2="464.86" y2="53" stroke="#888" stroke-width="0.45"/>
<line x1="467.15" y1="49.6" x2="467.15" y2="50.6" stroke="#aaa" stroke-width="0.45"/>
<line x1="469.45" y1="49.6" x2="469.45" y2="50.6" stroke="#aaa" stroke-width="0.45"/>
<line x1="471.75" y1="49.6" x2="471.75" y2="50.6" stroke="#aaa" stroke-width="0.45"/>
<text x="474.05" y="50.7" font-size="4.2" fill="#6a6a6a" text-anchor="middle">15</text>
<line x1="476.35" y1="49.6" x2="476.35" y2="50.6" stroke="#aaa" stroke-width="0.45"/>
<line x1="478.65" y1="49.6" x2="478.65" y2="50.6" stroke="#aaa" stroke-width="0.45"/>
<line x1="480.95" y1="49.6" x2="480.95" y2="50.6" stroke="#aaa" stroke-width="0.45"/>
<line x1="483.25" y1="50.8" x2="483.25" y2="53" stroke="#888" stroke-width="0.45"/>
<line x1="485.54" y1="49.6" x2="485.54" y2="50.6" stroke="#aaa" stroke-width="0.45"/>
<line x1="487.84" y1="49.6" x2="487.84" y2="50.6" stroke="#aaa" stroke-width="0.45"/>
<line x1="490.14" y1="49.6" x2="490.14" y2="50.6" stroke="#aaa" stroke-width="0.45"/>
<text x="492.44" y="50.7" font-size="4.2" fill="#6a6a6a" text-anchor="middle">16</text>
<line x1="494.74" y1="49.6" x2="494.74" y2="50.6" stroke="#aaa" stroke-width="0.45"/>
<line x1="497.04" y1="49.6" x2="497.04" y2="50.6" stroke="#aaa" stroke-width="0.45"/>
<line x1="499.34" y1="49.6" x2="499.34" y2="50.6" stroke="#aaa" stroke-width="0.45"/>
<line x1="501.63" y1="50.8" x2="501.63" y2="53" stroke="#888" stroke-width="0.45"/>
<line x1="503.93" y1="49.6" x2="503.93" y2="50.6" stroke="#aaa" stroke-width="0.45"/>
<line x1="506.23" y1="49.6" x2="506.23" y2="50.6" stroke="#aaa" stroke-width="0.45"/>
<line x1="508.53" y1="49.6" x2="508.53" y2="50.6" stroke="#aaa" stroke-width="0.45"/>
<text x="510.83" y="50.7" font-size="4.2" fill="#6a6a6a" text-anchor="middle">17</text>
<line x1="513.13" y1="49.6" x2="513.13" y2="50.6" stroke="#aaa" stroke-width="0.45"/>
<line x1="515.43" y1="49.6" x2="515.43" y2="50.6" stroke="#aaa" stroke-width="0.45"/>
<line x1="517.73" y1="49.6" x2="517.73" y2="50.6" stroke="#aaa" stroke-width="0.45"/>
<line x1="520.02" y1="50.8" x2="520.02" y2="53" stroke="#888" stroke-width="0.45"/>
<line x1="522.32" y1="49.6" x2="522.32" y2="50.6" stroke="#aaa" stroke-width="0.45"/>
<line x1="524.62" y1="49.6" x2="524.62" y2="50.6" stroke="#aaa" stroke-width="0.45"/>
<line x1="526.92" y1="49.6" x2="526.92" y2="50.6" stroke="#aaa" stroke-width="0.45"/>
<text x="529.22" y="50.7" font-size="4.2" fill="#6a6a6a" text-anchor="middle">18</text>
<line x1="531.52" y1="49.6" x2="531.52" y2="50.6" stroke="#aaa" stroke-width="0.45"/>
<line x1="533.82" y1="49.6" x2="533.82" y2="50.6" stroke="#aaa" stroke-width="0.45"/>
<line x1="536.12" y1="49.6" x2="536.12" y2="50.6" stroke="#aaa" stroke-width="0.45"/>
<line x1="538.42" y1="50.8" x2="538.42" y2="53" stroke="#888" stroke-width="0.45"/>
<line x1="540.71" y1="49.6" x2="540.71" y2="50.6" stroke="#aaa" stroke-width="0.45"/>
<line x1="543.01" y1="49.6" x2="543.01" y2="50.6" stroke="#aaa" stroke-width="0.45"/>
<line x1="545.31" y1="49.6" x2="545.31" y2="50.6" stroke="#aaa" stroke-width="0.45"/>
<text x="547.61" y="50.7" font-size="4.2" fill="#6a6a6a" text-anchor="middle">19</text>
<line x1="549.91" y1="49.6" x2="549.91" y2="50.6" stroke="#aaa" stroke-width="0.45"/>
<line x1="552.21" y1="49.6" x2="552.21" y2="50.6" stroke="#aaa" stroke-width="0.45"/>
<line x1="554.51" y1="49.6" x2="554.51" y2="50.6" stroke="#aaa" stroke-width="0.45"/>
<line x1="556.81" y1="50.8" x2="556.81" y2="53" stroke="#888" stroke-width="0.45"/>
<line x1="559.10" y1="49.6" x2="559.10" y2="50.6" stroke="#aaa" stroke-width="0.45"/>
<line x1="561.40" y1="49.6" x2="561.40" y2="50.6" stroke="#aaa" stroke-width="0.45"/>
<line x1="563.70" y1="49.6" x2="563.70" y2="50.6" stroke="#aaa" stroke-width="0.45"/>
<text x="566.00" y="50.7" font-size="4.2" fill="#6a6a6a" text-anchor="middle">20</text>
<line x1="568.30" y1="49.6" x2="568.30" y2="50.6" stroke="#aaa" stroke-width="0.45"/>
<line x1="570.60" y1="49.6" x2="570.60" y2="50.6" stroke="#aaa" stroke-width="0.45"/>
<line x1="572.90" y1="49.6" x2="572.90" y2="50.6" stroke="#aaa" stroke-width="0.45"/>
<line x1="575.20" y1="50.8" x2="575.20" y2="53" stroke="#888" stroke-width="0.45"/>
<line x1="577.49" y1="49.6" x2="577.49" y2="50.6" stroke="#aaa" stroke-width="0.45"/>
<line x1="579.79" y1="49.6" x2="579.79" y2="50.6" stroke="#aaa" stroke-width="0.45"/>
<line x1="582.09" y1="49.6" x2="582.09" y2="50.6" stroke="#aaa" stroke-width="0.45"/>
<text x="584.39" y="50.7" font-size="4.2" fill="#6a6a6a" text-anchor="middle">21</text>
<line x1="586.69" y1="49.6" x2="586.69" y2="50.6" stroke="#aaa" stroke-width="0.45"/>
<line x1="588.99" y1="49.6" x2="588.99" y2="50.6" stroke="#aaa" stroke-width="0.45"/>
<line x1="591.29" y1="49.6" x2="591.29" y2="50.6" stroke="#aaa" stroke-width="0.45"/>
<line x1="593.59" y1="50.8" x2="593.59" y2="53" stroke="#888" stroke-width="0.45"/>
<line x1="595.88" y1="49.6" x2="595.88" y2="50.6" stroke="#aaa" stroke-width="0.45"/>
<line x1="598.18" y1="49.6" x2="598.18" y2="50.6" stroke="#aaa" stroke-width="0.45"/>
<line x1="600.48" y1="49.6" x2="600.48" y2="50.6" stroke="#aaa" stroke-width="0.45"/>
<text x="602.78" y="50.7" font-size="4.2" fill="#6a6a6a" text-anchor="middle">22</text>
<line x1="605.08" y1="49.6" x2="605.08" y2="50.6" stroke="#aaa" stroke-width="0.45"/>
<line x1="607.38" y1="49.6" x2="607.38" y2="50.6" stroke="#aaa" stroke-width="0.45"/>
<line x1="609.68" y1="49.6" x2="609.68" y2="50.6" stroke="#aaa" stroke-width="0.45"/>
<line x1="611.98" y1="50.8" x2="611.98" y2="53" stroke="#888" stroke-width="0.45"/>
<line x1="614.27" y1="49.6" x2="614.27" y2="50.6" stroke="#aaa" stroke-width="0.45"/>
<line x1="616.57" y1="49.6" x2="616.57" y2="50.6" stroke="#aaa" stroke-width="0.45"/>
<line x1="618.87" y1="49.6" x2="618.87" y2="50.6" stroke="#aaa" stroke-width="0.45"/>
<text x="621.17" y="50.7" font-size="4.2" fill="#6a6a6a" text-anchor="middle">23</text>
<line x1="623.47" y1="49.6" x2="623.47" y2="50.6" stroke="#aaa" stroke-width="0.45"/>
<line x1="625.77" y1="49.6" x2="625.77" y2="50.6" stroke="#aaa" stroke-width="0.45"/>
<line x1="628.07" y1="49.6" x2="628.07" y2="50.6" stroke="#aaa" stroke-width="0.45"/>
<line x1="630.37" y1="50.8" x2="630.37" y2="53" stroke="#888" stroke-width="0.45"/>
<line x1="632.66" y1="49.6" x2="632.66" y2="50.6" stroke="#aaa" stroke-width="0.45"/>
<line x1="634.96" y1="49.6" x2="634.96" y2="50.6" stroke="#aaa" stroke-width="0.45"/>
<line x1="637.26" y1="49.6" x2="637.26" y2="50.6" stroke="#aaa" stroke-width="0.45"/>
<text x="639.56" y="50.7" font-size="4.2" fill="#6a6a6a" text-anchor="middle">24</text>
<line x1="641.86" y1="49.6" x2="641.86" y2="50.6" stroke="#aaa" stroke-width="0.45"/>
<line x1="644.16" y1="49.6" x2="644.16" y2="50.6" stroke="#aaa" stroke-width="0.45"/>
<line x1="646.46" y1="49.6" x2="646.46" y2="50.6" stroke="#aaa" stroke-width="0.45"/>
<line x1="648.75" y1="50.8" x2="648.75" y2="53" stroke="#888" stroke-width="0.45"/>
<line x1="651.05" y1="49.6" x2="651.05" y2="50.6" stroke="#aaa" stroke-width="0.45"/>
<line x1="653.35" y1="49.6" x2="653.35" y2="50.6" stroke="#aaa" stroke-width="0.45"/>
<line x1="655.65" y1="49.6" x2="655.65" y2="50.6" stroke="#aaa" stroke-width="0.45"/>
<text x="657.95" y="50.7" font-size="4.2" fill="#6a6a6a" text-anchor="middle">25</text>
<line x1="660.25" y1="49.6" x2="660.25" y2="50.6" stroke="#aaa" stroke-width="0.45"/>
<line x1="662.55" y1="49.6" x2="662.55" y2="50.6" stroke="#aaa" stroke-width="0.45"/>
<line x1="664.85" y1="49.6" x2="664.85" y2="50.6" stroke="#aaa" stroke-width="0.45"/>
<line x1="667.15" y1="50.8" x2="667.15" y2="53" stroke="#888" stroke-width="0.45"/>
<line x1="669.44" y1="49.6" x2="669.44" y2="50.6" stroke="#aaa" stroke-width="0.45"/>
<line x1="671.74" y1="49.6" x2="671.74" y2="50.6" stroke="#aaa" stroke-width="0.45"/>
<line x1="674.04" y1="49.6" x2="674.04" y2="50.6" stroke="#aaa" stroke-width="0.45"/>
<text x="676.34" y="50.7" font-size="4.2" fill="#6a6a6a" text-anchor="middle">26</text>
<line x1="678.64" y1="49.6" x2="678.64" y2="50.6" stroke="#aaa" stroke-width="0.45"/>
<line x1="680.94" y1="49.6" x2="680.94" y2="50.6" stroke="#aaa" stroke-width="0.45"/>
<line x1="683.24" y1="49.6" x2="683.24" y2="50.6" stroke="#aaa" stroke-width="0.45"/>
<line x1="685.53" y1="50.8" x2="685.53" y2="53" stroke="#888" stroke-width="0.45"/>
<line x1="687.83" y1="49.6" x2="687.83" y2="50.6" stroke="#aaa" stroke-width="0.45"/>
<line x1="690.13" y1="49.6" x2="690.13" y2="50.6" stroke="#aaa" stroke-width="0.45"/>
<line x1="692.43" y1="49.6" x2="692.43" y2="50.6" stroke="#aaa" stroke-width="0.45"/>
<text x="694.73" y="50.7" font-size="4.2" fill="#6a6a6a" text-anchor="middle">27</text>
<line x1="697.03" y1="49.6" x2="697.03" y2="50.6" stroke="#aaa" stroke-width="0.45"/>
<line x1="699.33" y1="49.6" x2="699.33" y2="50.6" stroke="#aaa" stroke-width="0.45"/>
<line x1="701.63" y1="49.6" x2="701.63" y2="50.6" stroke="#aaa" stroke-width="0.45"/>
<line x1="703.93" y1="50.8" x2="703.93" y2="53" stroke="#888" stroke-width="0.45"/>
<line x1="706.22" y1="49.6" x2="706.22" y2="50.6" stroke="#aaa" stroke-width="0.45"/>
<line x1="708.52" y1="49.6" x2="708.52" y2="50.6" stroke="#aaa" stroke-width="0.45"/>
<line x1="710.82" y1="49.6" x2="710.82" y2="50.6" stroke="#aaa" stroke-width="0.45"/>
<text x="713.12" y="50.7" font-size="4.2" fill="#6a6a6a" text-anchor="middle">28</text>
<line x1="715.42" y1="49.6" x2="715.42" y2="50.6" stroke="#aaa" stroke-width="0.45"/>
<line x1="717.72" y1="49.6" x2="717.72" y2="50.6" stroke="#aaa" stroke-width="0.45"/>
<line x1="720.02" y1="49.6" x2="720.02" y2="50.6" stroke="#aaa" stroke-width="0.45"/>
<line x1="722.32" y1="50.8" x2="722.32" y2="53" stroke="#888" stroke-width="0.45"/>
<line x1="724.61" y1="49.6" x2="724.61" y2="50.6" stroke="#aaa" stroke-width="0.45"/>
<line x1="726.91" y1="49.6" x2="726.91" y2="50.6" stroke="#aaa" stroke-width="0.45"/>
<line x1="729.21" y1="49.6" x2="729.21" y2="50.6" stroke="#aaa" stroke-width="0.45"/>
<text x="731.51" y="50.7" font-size="4.2" fill="#6a6a6a" text-anchor="middle">29</text>
<line x1="733.81" y1="49.6" x2="733.81" y2="50.6" stroke="#aaa" stroke-width="0.45"/>
<line x1="736.11" y1="49.6" x2="736.11" y2="50.6" stroke="#aaa" stroke-width="0.45"/>
<line x1="738.41" y1="49.6" x2="738.41" y2="50.6" stroke="#aaa" stroke-width="0.45"/>
<line x1="740.71" y1="50.8" x2="740.71" y2="53" stroke="#888" stroke-width="0.45"/>
<line x1="743.00" y1="49.6" x2="743.00" y2="50.6" stroke="#aaa" stroke-width="0.45"/>
<line x1="745.30" y1="49.6" x2="745.30" y2="50.6" stroke="#aaa" stroke-width="0.45"/>
<line x1="747.60" y1="49.6" x2="747.60" y2="50.6" stroke="#aaa" stroke-width="0.45"/>
<text x="749.90" y="50.7" font-size="4.2" fill="#6a6a6a" text-anchor="middle">30</text>
<line x1="752.20" y1="49.6" x2="752.20" y2="50.6" stroke="#aaa" stroke-width="0.45"/>
<line x1="754.50" y1="49.6" x2="754.50" y2="50.6" stroke="#aaa" stroke-width="0.45"/>
<line x1="756.80" y1="49.6" x2="756.80" y2="50.6" stroke="#aaa" stroke-width="0.45"/>
<path d="M196.8,47.5 h3.6 l-1.8,2.2 z M196.8,53 h3.6 l-1.8,-2.2 z" fill="#fff" stroke="#888" stroke-width="0.4"/>
<rect x="114.6" y="53.4" width="6.6" height="371" fill="#fff"/>
<rect x="114.6" y="71" width="6.6" height="242.7" fill="#dedede"/>
<rect x="114.6" y="359.5" width="6.6" height="60" fill="#dedede"/>
<line x1="117.4" y1="71.23" x2="118.4" y2="71.23" stroke="#aaa" stroke-width="0.45"/>
<text x="0" y="0" font-size="4.2" fill="#555" text-anchor="middle" transform="translate(119,73.53) rotate(-90)">13</text>
<line x1="117.4" y1="75.83" x2="118.4" y2="75.83" stroke="#aaa" stroke-width="0.45"/>
<line x1="117.4" y1="78.13" x2="118.4" y2="78.13" stroke="#aaa" stroke-width="0.45"/>
<line x1="117.4" y1="80.43" x2="118.4" y2="80.43" stroke="#aaa" stroke-width="0.45"/>
<line x1="118.8" y1="82.73" x2="121" y2="82.73" stroke="#888" stroke-width="0.45"/>
<line x1="117.4" y1="85.02" x2="118.4" y2="85.02" stroke="#aaa" stroke-width="0.45"/>
<line x1="117.4" y1="87.32" x2="118.4" y2="87.32" stroke="#aaa" stroke-width="0.45"/>
<line x1="117.4" y1="89.62" x2="118.4" y2="89.62" stroke="#aaa" stroke-width="0.45"/>
<text x="0" y="0" font-size="4.2" fill="#555" text-anchor="middle" transform="translate(119,91.92) rotate(-90)">12</text>
<line x1="117.4" y1="94.22" x2="118.4" y2="94.22" stroke="#aaa" stroke-width="0.45"/>
<line x1="117.4" y1="96.52" x2="118.4" y2="96.52" stroke="#aaa" stroke-width="0.45"/>
<line x1="117.4" y1="98.82" x2="118.4" y2="98.82" stroke="#aaa" stroke-width="0.45"/>
<line x1="118.8" y1="101.12" x2="121" y2="101.12" stroke="#888" stroke-width="0.45"/>
<line x1="117.4" y1="103.41" x2="118.4" y2="103.41" stroke="#aaa" stroke-width="0.45"/>
<line x1="117.4" y1="105.71" x2="118.4" y2="105.71" stroke="#aaa" stroke-width="0.45"/>
<line x1="117.4" y1="108.01" x2="118.4" y2="108.01" stroke="#aaa" stroke-width="0.45"/>
<text x="0" y="0" font-size="4.2" fill="#555" text-anchor="middle" transform="translate(119,110.31) rotate(-90)">11</text>
<line x1="117.4" y1="112.61" x2="118.4" y2="112.61" stroke="#aaa" stroke-width="0.45"/>
<line x1="117.4" y1="114.91" x2="118.4" y2="114.91" stroke="#aaa" stroke-width="0.45"/>
<line x1="117.4" y1="117.21" x2="118.4" y2="117.21" stroke="#aaa" stroke-width="0.45"/>
<line x1="118.8" y1="119.50" x2="121" y2="119.50" stroke="#888" stroke-width="0.45"/>
<line x1="117.4" y1="121.80" x2="118.4" y2="121.80" stroke="#aaa" stroke-width="0.45"/>
<line x1="117.4" y1="124.10" x2="118.4" y2="124.10" stroke="#aaa" stroke-width="0.45"/>
<line x1="117.4" y1="126.40" x2="118.4" y2="126.40" stroke="#aaa" stroke-width="0.45"/>
<text x="0" y="0" font-size="4.2" fill="#555" text-anchor="middle" transform="translate(119,128.70) rotate(-90)">10</text>
<line x1="117.4" y1="131.00" x2="118.4" y2="131.00" stroke="#aaa" stroke-width="0.45"/>
<line x1="117.4" y1="133.30" x2="118.4" y2="133.30" stroke="#aaa" stroke-width="0.45"/>
<line x1="117.4" y1="135.60" x2="118.4" y2="135.60" stroke="#aaa" stroke-width="0.45"/>
<line x1="118.8" y1="137.90" x2="121" y2="137.90" stroke="#888" stroke-width="0.45"/>
<line x1="117.4" y1="140.19" x2="118.4" y2="140.19" stroke="#aaa" stroke-width="0.45"/>
<line x1="117.4" y1="142.49" x2="118.4" y2="142.49" stroke="#aaa" stroke-width="0.45"/>
<line x1="117.4" y1="144.79" x2="118.4" y2="144.79" stroke="#aaa" stroke-width="0.45"/>
<text x="0" y="0" font-size="4.2" fill="#555" text-anchor="middle" transform="translate(119,147.09) rotate(-90)">9</text>
<line x1="117.4" y1="149.39" x2="118.4" y2="149.39" stroke="#aaa" stroke-width="0.45"/>
<line x1="117.4" y1="151.69" x2="118.4" y2="151.69" stroke="#aaa" stroke-width="0.45"/>
<line x1="117.4" y1="153.99" x2="118.4" y2="153.99" stroke="#aaa" stroke-width="0.45"/>
<line x1="118.8" y1="156.29" x2="121" y2="156.29" stroke="#888" stroke-width="0.45"/>
<line x1="117.4" y1="158.58" x2="118.4" y2="158.58" stroke="#aaa" stroke-width="0.45"/>
<line x1="117.4" y1="160.88" x2="118.4" y2="160.88" stroke="#aaa" stroke-width="0.45"/>
<line x1="117.4" y1="163.18" x2="118.4" y2="163.18" stroke="#aaa" stroke-width="0.45"/>
<text x="0" y="0" font-size="4.2" fill="#555" text-anchor="middle" transform="translate(119,165.48) rotate(-90)">8</text>
<line x1="117.4" y1="167.78" x2="118.4" y2="167.78" stroke="#aaa" stroke-width="0.45"/>
<line x1="117.4" y1="170.08" x2="118.4" y2="170.08" stroke="#aaa" stroke-width="0.45"/>
<line x1="117.4" y1="172.38" x2="118.4" y2="172.38" stroke="#aaa" stroke-width="0.45"/>
<line x1="118.8" y1="174.68" x2="121" y2="174.68" stroke="#888" stroke-width="0.45"/>
<line x1="117.4" y1="176.97" x2="118.4" y2="176.97" stroke="#aaa" stroke-width="0.45"/>
<line x1="117.4" y1="179.27" x2="118.4" y2="179.27" stroke="#aaa" stroke-width="0.45"/>
<line x1="117.4" y1="181.57" x2="118.4" y2="181.57" stroke="#aaa" stroke-width="0.45"/>
<text x="0" y="0" font-size="4.2" fill="#555" text-anchor="middle" transform="translate(119,183.87) rotate(-90)">7</text>
<line x1="117.4" y1="186.17" x2="118.4" y2="186.17" stroke="#aaa" stroke-width="0.45"/>
<line x1="117.4" y1="188.47" x2="118.4" y2="188.47" stroke="#aaa" stroke-width="0.45"/>
<line x1="117.4" y1="190.77" x2="118.4" y2="190.77" stroke="#aaa" stroke-width="0.45"/>
<line x1="118.8" y1="193.06" x2="121" y2="193.06" stroke="#888" stroke-width="0.45"/>
<line x1="117.4" y1="195.36" x2="118.4" y2="195.36" stroke="#aaa" stroke-width="0.45"/>
<line x1="117.4" y1="197.66" x2="118.4" y2="197.66" stroke="#aaa" stroke-width="0.45"/>
<line x1="117.4" y1="199.96" x2="118.4" y2="199.96" stroke="#aaa" stroke-width="0.45"/>
<text x="0" y="0" font-size="4.2" fill="#555" text-anchor="middle" transform="translate(119,202.26) rotate(-90)">6</text>
<line x1="117.4" y1="204.56" x2="118.4" y2="204.56" stroke="#aaa" stroke-width="0.45"/>
<line x1="117.4" y1="206.86" x2="118.4" y2="206.86" stroke="#aaa" stroke-width="0.45"/>
<line x1="117.4" y1="209.16" x2="118.4" y2="209.16" stroke="#aaa" stroke-width="0.45"/>
<line x1="118.8" y1="211.46" x2="121" y2="211.46" stroke="#888" stroke-width="0.45"/>
<line x1="117.4" y1="213.75" x2="118.4" y2="213.75" stroke="#aaa" stroke-width="0.45"/>
<line x1="117.4" y1="216.05" x2="118.4" y2="216.05" stroke="#aaa" stroke-width="0.45"/>
<line x1="117.4" y1="218.35" x2="118.4" y2="218.35" stroke="#aaa" stroke-width="0.45"/>
<text x="0" y="0" font-size="4.2" fill="#555" text-anchor="middle" transform="translate(119,220.65) rotate(-90)">5</text>
<line x1="117.4" y1="222.95" x2="118.4" y2="222.95" stroke="#aaa" stroke-width="0.45"/>
<line x1="117.4" y1="225.25" x2="118.4" y2="225.25" stroke="#aaa" stroke-width="0.45"/>
<line x1="117.4" y1="227.55" x2="118.4" y2="227.55" stroke="#aaa" stroke-width="0.45"/>
<line x1="118.8" y1="229.85" x2="121" y2="229.85" stroke="#888" stroke-width="0.45"/>
<line x1="117.4" y1="232.14" x2="118.4" y2="232.14" stroke="#aaa" stroke-width="0.45"/>
<line x1="117.4" y1="234.44" x2="118.4" y2="234.44" stroke="#aaa" stroke-width="0.45"/>
<line x1="117.4" y1="236.74" x2="118.4" y2="236.74" stroke="#aaa" stroke-width="0.45"/>
<text x="0" y="0" font-size="4.2" fill="#555" text-anchor="middle" transform="translate(119,239.04) rotate(-90)">4</text>
<line x1="117.4" y1="241.34" x2="118.4" y2="241.34" stroke="#aaa" stroke-width="0.45"/>
<line x1="117.4" y1="243.64" x2="118.4" y2="243.64" stroke="#aaa" stroke-width="0.45"/>
<line x1="117.4" y1="245.94" x2="118.4" y2="245.94" stroke="#aaa" stroke-width="0.45"/>
<line x1="118.8" y1="248.24" x2="121" y2="248.24" stroke="#888" stroke-width="0.45"/>
<line x1="117.4" y1="250.53" x2="118.4" y2="250.53" stroke="#aaa" stroke-width="0.45"/>
<line x1="117.4" y1="252.83" x2="118.4" y2="252.83" stroke="#aaa" stroke-width="0.45"/>
<line x1="117.4" y1="255.13" x2="118.4" y2="255.13" stroke="#aaa" stroke-width="0.45"/>
<text x="0" y="0" font-size="4.2" fill="#555" text-anchor="middle" transform="translate(119,257.43) rotate(-90)">3</text>
<line x1="117.4" y1="259.73" x2="118.4" y2="259.73" stroke="#aaa" stroke-width="0.45"/>
<line x1="117.4" y1="262.03" x2="118.4" y2="262.03" stroke="#aaa" stroke-width="0.45"/>
<line x1="117.4" y1="264.33" x2="118.4" y2="264.33" stroke="#aaa" stroke-width="0.45"/>
<line x1="118.8" y1="266.62" x2="121" y2="266.62" stroke="#888" stroke-width="0.45"/>
<line x1="117.4" y1="268.92" x2="118.4" y2="268.92" stroke="#aaa" stroke-width="0.45"/>
<line x1="117.4" y1="271.22" x2="118.4" y2="271.22" stroke="#aaa" stroke-width="0.45"/>
<line x1="117.4" y1="273.52" x2="118.4" y2="273.52" stroke="#aaa" stroke-width="0.45"/>
<text x="0" y="0" font-size="4.2" fill="#555" text-anchor="middle" transform="translate(119,275.82) rotate(-90)">2</text>
<line x1="117.4" y1="278.12" x2="118.4" y2="278.12" stroke="#aaa" stroke-width="0.45"/>
<line x1="117.4" y1="280.42" x2="118.4" y2="280.42" stroke="#aaa" stroke-width="0.45"/>
<line x1="117.4" y1="282.72" x2="118.4" y2="282.72" stroke="#aaa" stroke-width="0.45"/>
<line x1="118.8" y1="285.02" x2="121" y2="285.02" stroke="#888" stroke-width="0.45"/>
<line x1="117.4" y1="287.31" x2="118.4" y2="287.31" stroke="#aaa" stroke-width="0.45"/>
<line x1="117.4" y1="289.61" x2="118.4" y2="289.61" stroke="#aaa" stroke-width="0.45"/>
<line x1="117.4" y1="291.91" x2="118.4" y2="291.91" stroke="#aaa" stroke-width="0.45"/>
<text x="0" y="0" font-size="4.2" fill="#555" text-anchor="middle" transform="translate(119,294.21) rotate(-90)">1</text>
<line x1="117.4" y1="296.51" x2="118.4" y2="296.51" stroke="#aaa" stroke-width="0.45"/>
<line x1="117.4" y1="298.81" x2="118.4" y2="298.81" stroke="#aaa" stroke-width="0.45"/>
<line x1="117.4" y1="301.11" x2="118.4" y2="301.11" stroke="#aaa" stroke-width="0.45"/>
<line x1="118.8" y1="303.41" x2="121" y2="303.41" stroke="#888" stroke-width="0.45"/>
<line x1="117.4" y1="305.70" x2="118.4" y2="305.70" stroke="#aaa" stroke-width="0.45"/>
<line x1="117.4" y1="308.00" x2="118.4" y2="308.00" stroke="#aaa" stroke-width="0.45"/>
<line x1="117.4" y1="310.30" x2="118.4" y2="310.30" stroke="#aaa" stroke-width="0.45"/>
<line x1="117.4" y1="314.90" x2="118.4" y2="314.90" stroke="#aaa" stroke-width="0.45"/>
<line x1="117.4" y1="317.20" x2="118.4" y2="317.20" stroke="#aaa" stroke-width="0.45"/>
<line x1="117.4" y1="319.50" x2="118.4" y2="319.50" stroke="#aaa" stroke-width="0.45"/>
<line x1="118.8" y1="321.80" x2="121" y2="321.80" stroke="#888" stroke-width="0.45"/>
<line x1="117.4" y1="324.09" x2="118.4" y2="324.09" stroke="#aaa" stroke-width="0.45"/>
<line x1="117.4" y1="326.39" x2="118.4" y2="326.39" stroke="#aaa" stroke-width="0.45"/>
<line x1="117.4" y1="328.69" x2="118.4" y2="328.69" stroke="#aaa" stroke-width="0.45"/>
<text x="0" y="0" font-size="4.2" fill="#555" text-anchor="middle" transform="translate(119,330.99) rotate(-90)">1</text>
<line x1="117.4" y1="333.29" x2="118.4" y2="333.29" stroke="#aaa" stroke-width="0.45"/>
<line x1="117.4" y1="335.59" x2="118.4" y2="335.59" stroke="#aaa" stroke-width="0.45"/>
<line x1="117.4" y1="337.89" x2="118.4" y2="337.89" stroke="#aaa" stroke-width="0.45"/>
<line x1="118.8" y1="340.19" x2="121" y2="340.19" stroke="#888" stroke-width="0.45"/>
<line x1="117.4" y1="342.48" x2="118.4" y2="342.48" stroke="#aaa" stroke-width="0.45"/>
<line x1="117.4" y1="344.78" x2="118.4" y2="344.78" stroke="#aaa" stroke-width="0.45"/>
<line x1="117.4" y1="347.08" x2="118.4" y2="347.08" stroke="#aaa" stroke-width="0.45"/>
<text x="0" y="0" font-size="4.2" fill="#555" text-anchor="middle" transform="translate(119,349.38) rotate(-90)">2</text>
<line x1="117.4" y1="351.68" x2="118.4" y2="351.68" stroke="#aaa" stroke-width="0.45"/>
<line x1="117.4" y1="353.98" x2="118.4" y2="353.98" stroke="#aaa" stroke-width="0.45"/>
<line x1="117.4" y1="356.28" x2="118.4" y2="356.28" stroke="#aaa" stroke-width="0.45"/>
<line x1="118.8" y1="358.57" x2="121" y2="358.57" stroke="#888" stroke-width="0.45"/>
<line x1="117.4" y1="360.87" x2="118.4" y2="360.87" stroke="#aaa" stroke-width="0.45"/>
<line x1="117.4" y1="363.17" x2="118.4" y2="363.17" stroke="#aaa" stroke-width="0.45"/>
<line x1="117.4" y1="365.47" x2="118.4" y2="365.47" stroke="#aaa" stroke-width="0.45"/>
<text x="0" y="0" font-size="4.2" fill="#555" text-anchor="middle" transform="translate(119,367.77) rotate(-90)">3</text>
<line x1="117.4" y1="370.07" x2="118.4" y2="370.07" stroke="#aaa" stroke-width="0.45"/>
<line x1="117.4" y1="372.37" x2="118.4" y2="372.37" stroke="#aaa" stroke-width="0.45"/>
<line x1="117.4" y1="374.67" x2="118.4" y2="374.67" stroke="#aaa" stroke-width="0.45"/>
<line x1="118.8" y1="376.97" x2="121" y2="376.97" stroke="#888" stroke-width="0.45"/>
<line x1="117.4" y1="379.26" x2="118.4" y2="379.26" stroke="#aaa" stroke-width="0.45"/>
<line x1="117.4" y1="381.56" x2="118.4" y2="381.56" stroke="#aaa" stroke-width="0.45"/>
<line x1="117.4" y1="383.86" x2="118.4" y2="383.86" stroke="#aaa" stroke-width="0.45"/>
<text x="0" y="0" font-size="4.2" fill="#555" text-anchor="middle" transform="translate(119,386.16) rotate(-90)">4</text>
<line x1="117.4" y1="388.46" x2="118.4" y2="388.46" stroke="#aaa" stroke-width="0.45"/>
<line x1="117.4" y1="390.76" x2="118.4" y2="390.76" stroke="#aaa" stroke-width="0.45"/>
<line x1="117.4" y1="393.06" x2="118.4" y2="393.06" stroke="#aaa" stroke-width="0.45"/>
<line x1="118.8" y1="395.36" x2="121" y2="395.36" stroke="#888" stroke-width="0.45"/>
<line x1="117.4" y1="397.65" x2="118.4" y2="397.65" stroke="#aaa" stroke-width="0.45"/>
<line x1="117.4" y1="399.95" x2="118.4" y2="399.95" stroke="#aaa" stroke-width="0.45"/>
<line x1="117.4" y1="402.25" x2="118.4" y2="402.25" stroke="#aaa" stroke-width="0.45"/>
<text x="0" y="0" font-size="4.2" fill="#555" text-anchor="middle" transform="translate(119,404.55) rotate(-90)">5</text>
<line x1="117.4" y1="406.85" x2="118.4" y2="406.85" stroke="#aaa" stroke-width="0.45"/>
<line x1="117.4" y1="409.15" x2="118.4" y2="409.15" stroke="#aaa" stroke-width="0.45"/>
<line x1="117.4" y1="411.45" x2="118.4" y2="411.45" stroke="#aaa" stroke-width="0.45"/>
<line x1="118.8" y1="413.75" x2="121" y2="413.75" stroke="#888" stroke-width="0.45"/>
<line x1="117.4" y1="416.04" x2="118.4" y2="416.04" stroke="#aaa" stroke-width="0.45"/>
<line x1="117.4" y1="418.34" x2="118.4" y2="418.34" stroke="#aaa" stroke-width="0.45"/>
<path d="M115.5,49 h2.5 v2.5" fill="none" stroke="#888" stroke-width="0.5"/>
<g id="thumb">
<rect x="11" y="50.8" width="94.2" height="53.2" rx="2.5" fill="#fff"/>
<svg x="11.9" y="51.1" width="92.15" height="51.7" viewBox="137 71 620 348.5" preserveAspectRatio="none">
<polygon points="137,71 267.6,71 191.7,160.4 191.7,177 137,243" fill="#1b6482"/>
<polygon points="137,71 182,71 137,124" fill="#fbb731"/>
<polygon points="210.7,71 267.6,71 191.7,160.4 191.7,161.5 137,226.3 137,161.2" fill="#1f86ad"/>
<polygon points="719.4,354 757,312 757,322 719.4,363.5" fill="#fbb731"/>
<polygon points="670,420 757,322 757,420" fill="#1b6482"/>
<polygon points="691.6,420 757,349.7 757,420" fill="#1f86ad"/>
<g fill="#ebc07c"><circle cx="378" cy="169.5" r="29.8"/><polygon points="372.80,141.20 373.70,132.20 382.30,132.20 383.20,141.20" transform="rotate(0.00 378 169.5)"/><polygon points="372.80,141.20 373.70,132.20 382.30,132.20 383.20,141.20" transform="rotate(24.00 378 169.5)"/><polygon points="372.80,141.20 373.70,132.20 382.30,132.20 383.20,141.20" transform="rotate(48.00 378 169.5)"/><polygon points="372.80,141.20 373.70,132.20 382.30,132.20 383.20,141.20" transform="rotate(72.00 378 169.5)"/><polygon points="372.80,141.20 373.70,132.20 382.30,132.20 383.20,141.20" transform="rotate(96.00 378 169.5)"/><polygon points="372.80,141.20 373.70,132.20 382.30,132.20 383.20,141.20" transform="rotate(120.00 378 169.5)"/><polygon points="372.80,141.20 373.70,132.20 382.30,132.20 383.20,141.20" transform="rotate(144.00 378 169.5)"/><polygon points="372.80,141.20 373.70,132.20 382.30,132.20 383.20,141.20" transform="rotate(168.00 378 169.5)"/><polygon points="372.80,141.20 373.70,132.20 382.30,132.20 383.20,141.20" transform="rotate(192.00 378 169.5)"/><polygon points="372.80,141.20 373.70,132.20 382.30,132.20 383.20,141.20" transform="rotate(216.00 378 169.5)"/><polygon points="372.80,141.20 373.70,132.20 382.30,132.20 383.20,141.20" transform="rotate(240.00 378 169.5)"/><polygon points="372.80,141.20 373.70,132.20 382.30,132.20 383.20,141.20" transform="rotate(264.00 378 169.5)"/><polygon points="372.80,141.20 373.70,132.20 382.30,132.20 383.20,141.20" transform="rotate(288.00 378 169.5)"/><polygon points="372.80,141.20 373.70,132.20 382.30,132.20 383.20,141.20" transform="rotate(312.00 378 169.5)"/><polygon points="372.80,141.20 373.70,132.20 382.30,132.20 383.20,141.20" transform="rotate(336.00 378 169.5)"/></g><circle cx="378" cy="169.5" r="17.5" fill="#fff"/>
<g fill="#cbcaca"><circle cx="463" cy="130.5" r="21"/><polygon points="459.38,111.00 460.10,103.50 465.90,103.50 466.62,111.00" transform="rotate(0.00 463 130.5)"/><polygon points="459.38,111.00 460.10,103.50 465.90,103.50 466.62,111.00" transform="rotate(22.50 463 130.5)"/><polygon points="459.38,111.00 460.10,103.50 465.90,103.50 466.62,111.00" transform="rotate(45.00 463 130.5)"/><polygon points="459.38,111.00 460.10,103.50 465.90,103.50 466.62,111.00" transform="rotate(67.50 463 130.5)"/><polygon points="459.38,111.00 460.10,103.50 465.90,103.50 466.62,111.00" transform="rotate(90.00 463 130.5)"/><polygon points="459.38,111.00 460.10,103.50 465.90,103.50 466.62,111.00" transform="rotate(112.50 463 130.5)"/><polygon points="459.38,111.00 460.10,103.50 465.90,103.50 466.62,111.00" transform="rotate(135.00 463 130.5)"/><polygon points="459.38,111.00 460.10,103.50 465.90,103.50 466.62,111.00" transform="rotate(157.50 463 130.5)"/><polygon points="459.38,111.00 460.10,103.50 465.90,103.50 466.62,111.00" transform="rotate(180.00 463 130.5)"/><polygon points="459.38,111.00 460.10,103.50 465.90,103.50 466.62,111.00" transform="rotate(202.50 463 130.5)"/><polygon points="459.38,111.00 460.10,103.50 465.90,103.50 466.62,111.00" transform="rotate(225.00 463 130.5)"/><polygon points="459.38,111.00 460.10,103.50 465.90,103.50 466.62,111.00" transform="rotate(247.50 463 130.5)"/><polygon points="459.38,111.00 460.10,103.50 465.90,103.50 466.62,111.00" transform="rotate(270.00 463 130.5)"/><polygon points="459.38,111.00 460.10,103.50 465.90,103.50 466.62,111.00" transform="rotate(292.50 463 130.5)"/><polygon points="459.38,111.00 460.10,103.50 465.90,103.50 466.62,111.00" transform="rotate(315.00 463 130.5)"/><polygon points="459.38,111.00 460.10,103.50 465.90,103.50 466.62,111.00" transform="rotate(337.50 463 130.5)"/></g><circle cx="463" cy="130.5" r="12.8" fill="#fff"/>
<g fill="#6f9cb4"><circle cx="533" cy="221.2" r="16.2"/><polygon points="531.00,206.50 531.40,202.20 534.60,202.20 535.00,206.50" transform="rotate(0.00 533 221.2)"/><polygon points="531.00,206.50 531.40,202.20 534.60,202.20 535.00,206.50" transform="rotate(22.50 533 221.2)"/><polygon points="531.00,206.50 531.40,202.20 534.60,202.20 535.00,206.50" transform="rotate(45.00 533 221.2)"/><polygon points="531.00,206.50 531.40,202.20 534.60,202.20 535.00,206.50" transform="rotate(67.50 533 221.2)"/><polygon points="531.00,206.50 531.40,202.20 534.60,202.20 535.00,206.50" transform="rotate(90.00 533 221.2)"/><polygon points="531.00,206.50 531.40,202.20 534.60,202.20 535.00,206.50" transform="rotate(112.50 533 221.2)"/><polygon points="531.00,206.50 531.40,202.20 534.60,202.20 535.00,206.50" transform="rotate(135.00 533 221.2)"/><polygon points="531.00,206.50 531.40,202.20 534.60,202.20 535.00,206.50" transform="rotate(157.50 533 221.2)"/><polygon points="531.00,206.50 531.40,202.20 534.60,202.20 535.00,206.50" transform="rotate(180.00 533 221.2)"/><polygon points="531.00,206.50 531.40,202.20 534.60,202.20 535.00,206.50" transform="rotate(202.50 533 221.2)"/><polygon points="531.00,206.50 531.40,202.20 534.60,202.20 535.00,206.50" transform="rotate(225.00 533 221.2)"/><polygon points="531.00,206.50 531.40,202.20 534.60,202.20 535.00,206.50" transform="rotate(247.50 533 221.2)"/><polygon points="531.00,206.50 531.40,202.20 534.60,202.20 535.00,206.50" transform="rotate(270.00 533 221.2)"/><polygon points="531.00,206.50 531.40,202.20 534.60,202.20 535.00,206.50" transform="rotate(292.50 533 221.2)"/><polygon points="531.00,206.50 531.40,202.20 534.60,202.20 535.00,206.50" transform="rotate(315.00 533 221.2)"/><polygon points="531.00,206.50 531.40,202.20 534.60,202.20 535.00,206.50" transform="rotate(337.50 533 221.2)"/></g><circle cx="533" cy="221.2" r="9.5" fill="#fff"/>
<ellipse cx="447.5" cy="300.4" rx="125" ry="3.8" fill="#dadada"/>
<rect x="369" y="167.3" width="166.3" height="104.3" rx="3" fill="#6d6968"/>
<rect x="377" y="173" width="150.00" height="77.80" fill="#8fd3f4" />
<polygon points="377,173 527,173 377,250.8" fill="#bde4f8"/>
<rect x="445.2" y="257.1" width="13.7" height="6.3" rx="3.1" fill="#a9a6a5"/>
<polygon points="436.1,271.5 468.3,271.5 475.7,296.5 428.4,296.5" fill="#a3a09f"/>
<path d="M413,301.7 V298.8 Q413,296.3 415.5,296.3 H490.1 Q492.6,296.3 492.6,298.8 V301.7 Z" fill="#6d6968"/>
<rect x="405.2" y="129.5" width="92.80" height="121.50" fill="#f0f0f0" />
<rect x="413" y="138.3" width="77.60" height="5.50" fill="#1d7ea6" />
<rect x="413" y="146.2" width="54.00" height="3.30" fill="#fbb92e" />
<rect x="413" y="154.4" width="77.60" height="3.20" fill="#cccccc" />
<polyline points="421.7,178.6 434.7,168 449.5,164.9" fill="none" stroke="#1d7ea6" stroke-width="0.8"/>
<rect x="419.59999999999997" y="176.5" width="4.20" height="4.20" fill="#fbb92e" />
<rect x="432.59999999999997" y="165.9" width="4.20" height="4.20" fill="#fbb92e" />
<rect x="447.4" y="162.8" width="4.20" height="4.20" fill="#fbb92e" />
<path d="M473.6,181.8 L473.6,166.9 A14.9,14.9 0 0,1 488.5,181.8 Z" fill="#1d7ea6"/>
<path d="M473.6,181.8 L488.5,181.8 A14.9,14.9 0 0,1 473.6,196.70000000000002 Z" fill="#fbb92e"/>
<path d="M473.6,181.8 L473.6,196.70000000000002 A14.9,14.9 0 0,1 458.70000000000005,181.8 Z" fill="#6aa4c3"/>
<path d="M471.40000000000003,179.3 L456.50000000000006,179.3 A14.9,14.9 0 0,1 471.40000000000003,164.4 Z" fill="#f8d07f"/>
<rect x="413" y="183.3" width="34.00" height="3.10" fill="#dadada" />
<rect x="413" y="189.2" width="41.00" height="3.10" fill="#dadada" />
<rect x="413" y="195" width="43.00" height="3.20" fill="#dadada" />
<rect x="442" y="210.4" width="49.00" height="3.10" fill="#dadada" />
<rect x="442" y="216.8" width="49.00" height="3.10" fill="#dadada" />
<rect x="413" y="223.4" width="48.00" height="3.10" fill="#dadada" />
<rect x="413" y="230" width="48.00" height="3.00" fill="#dadada" />
<rect x="413" y="236.6" width="48.00" height="3.10" fill="#dadada" />
<rect x="413" y="202.9" width="21.90" height="17.70" fill="#8dcbea" />
<rect x="464.2" y="235.4" width="4.80" height="5.00" fill="#6aa4c3" />
<rect x="471.3" y="231.6" width="4.70" height="8.80" fill="#f0a81e" />
<rect x="478.6" y="227.2" width="4.80" height="13.20" fill="#6aa4c3" />
<rect x="486" y="223.6" width="4.70" height="16.80" fill="#f0a81e" />
<rect x="441" y="203.1" width="49.80" height="3.00" fill="#1b5f7e" />
<polyline points="357.4,234 371.6,212.4 395.1,227.8 407.5,211 421.7,219.8 438.5,193.3" fill="none" stroke="#1b5f7e" stroke-width="2.9" stroke-linejoin="miter" stroke-linecap="round"/>
<polygon points="443.8,187.8 430.5,196 443,203.3" fill="#1b5f7e"/>
<line x1="529.3" y1="139.6" x2="529.3" y2="148.2" stroke="#333" stroke-width="1.6"/>
<line x1="514.5" y1="144" x2="520.1" y2="151.1" stroke="#333" stroke-width="1.6"/>
<line x1="544.5" y1="143.5" x2="539.6" y2="150.6" stroke="#333" stroke-width="1.6"/>
<line x1="506.2" y1="156.1" x2="514" y2="158.4" stroke="#333" stroke-width="1.6"/>
<line x1="545.4" y1="157.7" x2="553.6" y2="155.6" stroke="#333" stroke-width="1.6"/>
<line x1="506.2" y1="171.6" x2="514" y2="168.3" stroke="#333" stroke-width="1.6"/>
<line x1="546.2" y1="167.6" x2="554.1" y2="171.3" stroke="#333" stroke-width="1.6"/>
<path d="M517.2,174.5 A14.6,14.6 0 1,1 542,174.5 C539.5,178 537.7,180.5 537.7,185.3 L521.5,185.3 C521.5,180.5 519.7,178 517.2,174.5 Z" fill="#f8b42b"/>
<path d="M524,153.2 A14.6,14.6 0 0,0 517.2,174.5 C519.7,178 521.5,180.5 521.5,185.3 L524,185.3 C523,181 522,178 520.5,174 C517.5,166 519,158 524,153.2 Z" fill="#eb9f27"/>
<ellipse cx="534.2" cy="156.9" rx="4.9" ry="2.9" transform="rotate(25 534.2 156.9)" fill="#fff3d6"/>
<polyline points="524.2,185 522.8,173.8 525.3,171 527.3,173.8 529.6,170.8 531.9,173.8 533.9,171 536.4,173.8 535,185" fill="none" stroke="#fcd68a" stroke-width="0.9"/>
<polyline points="526.5,185 526,174.5 M532.7,185 533.2,174.5" fill="none" stroke="#fcd68a" stroke-width="0.7"/>
<path d="M526.5,185 L526,174 M532.7,185 L533.2,174" stroke="#fcd68a" stroke-width="0.7"/>
<rect x="519.8" y="185.1" width="18.40" height="8.30" fill="#3a3a3a" rx="0.8"/>
<rect x="518.8" y="186.3" width="20.40" height="1.20" fill="#3a3a3a" rx="0.5"/>
<rect x="518.8" y="188.9" width="20.40" height="1.20" fill="#3a3a3a" rx="0.5"/>
<rect x="518.8" y="191.5" width="20.40" height="1.20" fill="#3a3a3a" rx="0.5"/>
<rect x="498.4" y="267" width="37.60" height="29.00" fill="#f2a81d" />
<ellipse cx="517.2" cy="296" rx="18.8" ry="5.7" fill="#f2a81d"/>
<path d="M498.4,272.0 A18.8,5.7 0 0,0 536,272.0" fill="none" stroke="#f8c552" stroke-width="0.7"/>
<path d="M498.4,275.4 A18.8,5.7 0 0,0 536,275.4" fill="none" stroke="#f8c552" stroke-width="0.7"/>
<path d="M498.4,278.8 A18.8,5.7 0 0,0 536,278.8" fill="none" stroke="#f8c552" stroke-width="0.7"/>
<path d="M498.4,282.2 A18.8,5.7 0 0,0 536,282.2" fill="none" stroke="#f8c552" stroke-width="0.7"/>
<path d="M498.4,285.6 A18.8,5.7 0 0,0 536,285.6" fill="none" stroke="#f8c552" stroke-width="0.7"/>
<path d="M498.4,289.0 A18.8,5.7 0 0,0 536,289.0" fill="none" stroke="#f8c552" stroke-width="0.7"/>
<path d="M498.4,292.4 A18.8,5.7 0 0,0 536,292.4" fill="none" stroke="#f8c552" stroke-width="0.7"/>
<path d="M498.4,295.8 A18.8,5.7 0 0,0 536,295.8" fill="none" stroke="#f8c552" stroke-width="0.7"/>
<ellipse cx="517.2" cy="267" rx="18.8" ry="6.2" fill="#f3ae2a"/>
<ellipse cx="517.2" cy="266.5" rx="15.5" ry="4.8" fill="#f9d283"/>
<text transform="translate(517.2,269.6) scale(1.2,0.62) rotate(-15)" x="0" y="0" font-size="10" font-weight="bold" fill="#f2b340" text-anchor="middle" font-family="Liberation Sans">$</text>
<rect x="250.1" y="310" width="393.8" height="49.6" fill="#ffff00"/><g font-size="41.7" font-weight="bold" fill="#2a2a1a" stroke="#2a2a1a" stroke-width="1.5" font-family="Liberation Sans"><text transform="translate(249.78,349) scale(0.849,1)">T</text><text transform="translate(270.98,349) scale(0.660,1)">E</text><text transform="translate(289.01,349) scale(0.722,1)">X</text><text transform="translate(311.37,349) scale(0.920,1)">T</text><text transform="translate(346.77,349) scale(0.867,1)">I</text><text transform="translate(358.60,349) scale(0.832,1)">S</text><text transform="translate(393.76,349) scale(0.800,1)">H</text><text transform="translate(422.21,349) scale(0.920,1)">I</text><text transform="translate(433.78,349) scale(0.833,1)">G</text><text transform="translate(461.94,349) scale(0.878,1)">H</text><text transform="translate(489.55,349) scale(0.734,1)">L</text><text transform="translate(509.16,349) scale(0.920,1)">I</text><text transform="translate(521.63,349) scale(0.865,1)">G</text><text transform="translate(549.35,349) scale(0.920,1)">H</text><text transform="translate(577.22,349) scale(0.920,1)">T</text><text transform="translate(602.81,349) scale(0.675,1)">E</text><text transform="translate(622.92,349) scale(0.672,1)">D</text></g>
</svg>
<rect x="11.1" y="50.9" width="94" height="53" rx="2.5" fill="none" stroke="#c4533d" stroke-width="1.7"/>
<text x="4.4" y="56.4" font-size="5.6" fill="#666" text-anchor="middle">1</text>
<polygon points="5,62.6 5.6,64.2 7.3,64.3 6,65.3 6.5,67 5,66 3.5,67 4,65.3 2.7,64.3 4.4,64.2" fill="#222"/>
<g fill="#999"><rect x="1.3" y="62.8" width="0.6" height="0.6"/><rect x="1.3" y="64.6" width="0.6" height="0.6"/><rect x="1.3" y="66.4" width="0.6" height="0.6"/></g>
</g>
<rect x="137" y="71" width="620" height="348.5" fill="#fff"/>
<g clip-path="url(#slideclip)">
<polygon points="137,71 267.6,71 191.7,160.4 191.7,177 137,243" fill="#1b6482"/>
<polygon points="137,71 182,71 137,124" fill="#fbb731"/>
<polygon points="210.7,71 267.6,71 191.7,160.4 191.7,161.5 137,226.3 137,161.2" fill="#1f86ad"/>
<polygon points="719.4,354 757,312 757,322 719.4,363.5" fill="#fbb731"/>
<polygon points="670,420 757,322 757,420" fill="#1b6482"/>
<polygon points="691.6,420 757,349.7 757,420" fill="#1f86ad"/>
<g fill="#ebc07c"><circle cx="378" cy="169.5" r="29.8"/><polygon points="372.80,141.20 373.70,132.20 382.30,132.20 383.20,141.20" transform="rotate(0.00 378 169.5)"/><polygon points="372.80,141.20 373.70,132.20 382.30,132.20 383.20,141.20" transform="rotate(24.00 378 169.5)"/><polygon points="372.80,141.20 373.70,132.20 382.30,132.20 383.20,141.20" transform="rotate(48.00 378 169.5)"/><polygon points="372.80,141.20 373.70,132.20 382.30,132.20 383.20,141.20" transform="rotate(72.00 378 169.5)"/><polygon points="372.80,141.20 373.70,132.20 382.30,132.20 383.20,141.20" transform="rotate(96.00 378 169.5)"/><polygon points="372.80,141.20 373.70,132.20 382.30,132.20 383.20,141.20" transform="rotate(120.00 378 169.5)"/><polygon points="372.80,141.20 373.70,132.20 382.30,132.20 383.20,141.20" transform="rotate(144.00 378 169.5)"/><polygon points="372.80,141.20 373.70,132.20 382.30,132.20 383.20,141.20" transform="rotate(168.00 378 169.5)"/><polygon points="372.80,141.20 373.70,132.20 382.30,132.20 383.20,141.20" transform="rotate(192.00 378 169.5)"/><polygon points="372.80,141.20 373.70,132.20 382.30,132.20 383.20,141.20" transform="rotate(216.00 378 169.5)"/><polygon points="372.80,141.20 373.70,132.20 382.30,132.20 383.20,141.20" transform="rotate(240.00 378 169.5)"/><polygon points="372.80,141.20 373.70,132.20 382.30,132.20 383.20,141.20" transform="rotate(264.00 378 169.5)"/><polygon points="372.80,141.20 373.70,132.20 382.30,132.20 383.20,141.20" transform="rotate(288.00 378 169.5)"/><polygon points="372.80,141.20 373.70,132.20 382.30,132.20 383.20,141.20" transform="rotate(312.00 378 169.5)"/><polygon points="372.80,141.20 373.70,132.20 382.30,132.20 383.20,141.20" transform="rotate(336.00 378 169.5)"/></g><circle cx="378" cy="169.5" r="17.5" fill="#fff"/>
<g fill="#cbcaca"><circle cx="463" cy="130.5" r="21"/><polygon points="459.38,111.00 460.10,103.50 465.90,103.50 466.62,111.00" transform="rotate(0.00 463 130.5)"/><polygon points="459.38,111.00 460.10,103.50 465.90,103.50 466.62,111.00" transform="rotate(22.50 463 130.5)"/><polygon points="459.38,111.00 460.10,103.50 465.90,103.50 466.62,111.00" transform="rotate(45.00 463 130.5)"/><polygon points="459.38,111.00 460.10,103.50 465.90,103.50 466.62,111.00" transform="rotate(67.50 463 130.5)"/><polygon points="459.38,111.00 460.10,103.50 465.90,103.50 466.62,111.00" transform="rotate(90.00 463 130.5)"/><polygon points="459.38,111.00 460.10,103.50 465.90,103.50 466.62,111.00" transform="rotate(112.50 463 130.5)"/><polygon points="459.38,111.00 460.10,103.50 465.90,103.50 466.62,111.00" transform="rotate(135.00 463 130.5)"/><polygon points="459.38,111.00 460.10,103.50 465.90,103.50 466.62,111.00" transform="rotate(157.50 463 130.5)"/><polygon points="459.38,111.00 460.10,103.50 465.90,103.50 466.62,111.00" transform="rotate(180.00 463 130.5)"/><polygon points="459.38,111.00 460.10,103.50 465.90,103.50 466.62,111.00" transform="rotate(202.50 463 130.5)"/><polygon points="459.38,111.00 460.10,103.50 465.90,103.50 466.62,111.00" transform="rotate(225.00 463 130.5)"/><polygon points="459.38,111.00 460.10,103.50 465.90,103.50 466.62,111.00" transform="rotate(247.50 463 130.5)"/><polygon points="459.38,111.00 460.10,103.50 465.90,103.50 466.62,111.00" transform="rotate(270.00 463 130.5)"/><polygon points="459.38,111.00 460.10,103.50 465.90,103.50 466.62,111.00" transform="rotate(292.50 463 130.5)"/><polygon points="459.38,111.00 460.10,103.50 465.90,103.50 466.62,111.00" transform="rotate(315.00 463 130.5)"/><polygon points="459.38,111.00 460.10,103.50 465.90,103.50 466.62,111.00" transform="rotate(337.50 463 130.5)"/></g><circle cx="463" cy="130.5" r="12.8" fill="#fff"/>
<g fill="#6f9cb4"><circle cx="533" cy="221.2" r="16.2"/><polygon points="531.00,206.50 531.40,202.20 534.60,202.20 535.00,206.50" transform="rotate(0.00 533 221.2)"/><polygon points="531.00,206.50 531.40,202.20 534.60,202.20 535.00,206.50" transform="rotate(22.50 533 221.2)"/><polygon points="531.00,206.50 531.40,202.20 534.60,202.20 535.00,206.50" transform="rotate(45.00 533 221.2)"/><polygon points="531.00,206.50 531.40,202.20 534.60,202.20 535.00,206.50" transform="rotate(67.50 533 221.2)"/><polygon points="531.00,206.50 531.40,202.20 534.60,202.20 535.00,206.50" transform="rotate(90.00 533 221.2)"/><polygon points="531.00,206.50 531.40,202.20 534.60,202.20 535.00,206.50" transform="rotate(112.50 533 221.2)"/><polygon points="531.00,206.50 531.40,202.20 534.60,202.20 535.00,206.50" transform="rotate(135.00 533 221.2)"/><polygon points="531.00,206.50 531.40,202.20 534.60,202.20 535.00,206.50" transform="rotate(157.50 533 221.2)"/><polygon points="531.00,206.50 531.40,202.20 534.60,202.20 535.00,206.50" transform="rotate(180.00 533 221.2)"/><polygon points="531.00,206.50 531.40,202.20 534.60,202.20 535.00,206.50" transform="rotate(202.50 533 221.2)"/><polygon points="531.00,206.50 531.40,202.20 534.60,202.20 535.00,206.50" transform="rotate(225.00 533 221.2)"/><polygon points="531.00,206.50 531.40,202.20 534.60,202.20 535.00,206.50" transform="rotate(247.50 533 221.2)"/><polygon points="531.00,206.50 531.40,202.20 534.60,202.20 535.00,206.50" transform="rotate(270.00 533 221.2)"/><polygon points="531.00,206.50 531.40,202.20 534.60,202.20 535.00,206.50" transform="rotate(292.50 533 221.2)"/><polygon points="531.00,206.50 531.40,202.20 534.60,202.20 535.00,206.50" transform="rotate(315.00 533 221.2)"/><polygon points="531.00,206.50 531.40,202.20 534.60,202.20 535.00,206.50" transform="rotate(337.50 533 221.2)"/></g><circle cx="533" cy="221.2" r="9.5" fill="#fff"/>
<ellipse cx="447.5" cy="300.4" rx="125" ry="3.8" fill="#dadada"/>
<rect x="369" y="167.3" width="166.3" height="104.3" rx="3" fill="#6d6968"/>
<rect x="377" y="173" width="150.00" height="77.80" fill="#8fd3f4" />
<polygon points="377,173 527,173 377,250.8" fill="#bde4f8"/>
<rect x="445.2" y="257.1" width="13.7" height="6.3" rx="3.1" fill="#a9a6a5"/>
<polygon points="436.1,271.5 468.3,271.5 475.7,296.5 428.4,296.5" fill="#a3a09f"/>
<path d="M413,301.7 V298.8 Q413,296.3 415.5,296.3 H490.1 Q492.6,296.3 492.6,298.8 V301.7 Z" fill="#6d6968"/>
<rect x="405.2" y="129.5" width="92.80" height="121.50" fill="#f0f0f0" />
<rect x="413" y="138.3" width="77.60" height="5.50" fill="#1d7ea6" />
<rect x="413" y="146.2" width="54.00" height="3.30" fill="#fbb92e" />
<rect x="413" y="154.4" width="77.60" height="3.20" fill="#cccccc" />
<polyline points="421.7,178.6 434.7,168 449.5,164.9" fill="none" stroke="#1d7ea6" stroke-width="0.8"/>
<rect x="419.59999999999997" y="176.5" width="4.20" height="4.20" fill="#fbb92e" />
<rect x="432.59999999999997" y="165.9" width="4.20" height="4.20" fill="#fbb92e" />
<rect x="447.4" y="162.8" width="4.20" height="4.20" fill="#fbb92e" />
<path d="M473.6,181.8 L473.6,166.9 A14.9,14.9 0 0,1 488.5,181.8 Z" fill="#1d7ea6"/>
<path d="M473.6,181.8 L488.5,181.8 A14.9,14.9 0 0,1 473.6,196.70000000000002 Z" fill="#fbb92e"/>
<path d="M473.6,181.8 L473.6,196.70000000000002 A14.9,14.9 0 0,1 458.70000000000005,181.8 Z" fill="#6aa4c3"/>
<path d="M471.40000000000003,179.3 L456.50000000000006,179.3 A14.9,14.9 0 0,1 471.40000000000003,164.4 Z" fill="#f8d07f"/>
<rect x="413" y="183.3" width="34.00" height="3.10" fill="#dadada" />
<rect x="413" y="189.2" width="41.00" height="3.10" fill="#dadada" />
<rect x="413" y="195" width="43.00" height="3.20" fill="#dadada" />
<rect x="442" y="210.4" width="49.00" height="3.10" fill="#dadada" />
<rect x="442" y="216.8" width="49.00" height="3.10" fill="#dadada" />
<rect x="413" y="223.4" width="48.00" height="3.10" fill="#dadada" />
<rect x="413" y="230" width="48.00" height="3.00" fill="#dadada" />
<rect x="413" y="236.6" width="48.00" height="3.10" fill="#dadada" />
<rect x="413" y="202.9" width="21.90" height="17.70" fill="#8dcbea" />
<rect x="464.2" y="235.4" width="4.80" height="5.00" fill="#6aa4c3" />
<rect x="471.3" y="231.6" width="4.70" height="8.80" fill="#f0a81e" />
<rect x="478.6" y="227.2" width="4.80" height="13.20" fill="#6aa4c3" />
<rect x="486" y="223.6" width="4.70" height="16.80" fill="#f0a81e" />
<rect x="441" y="203.1" width="49.80" height="3.00" fill="#1b5f7e" />
<polyline points="357.4,234 371.6,212.4 395.1,227.8 407.5,211 421.7,219.8 438.5,193.3" fill="none" stroke="#1b5f7e" stroke-width="2.9" stroke-linejoin="miter" stroke-linecap="round"/>
<polygon points="443.8,187.8 430.5,196 443,203.3" fill="#1b5f7e"/>
<line x1="529.3" y1="139.6" x2="529.3" y2="148.2" stroke="#333" stroke-width="1.6"/>
<line x1="514.5" y1="144" x2="520.1" y2="151.1" stroke="#333" stroke-width="1.6"/>
<line x1="544.5" y1="143.5" x2="539.6" y2="150.6" stroke="#333" stroke-width="1.6"/>
<line x1="506.2" y1="156.1" x2="514" y2="158.4" stroke="#333" stroke-width="1.6"/>
<line x1="545.4" y1="157.7" x2="553.6" y2="155.6" stroke="#333" stroke-width="1.6"/>
<line x1="506.2" y1="171.6" x2="514" y2="168.3" stroke="#333" stroke-width="1.6"/>
<line x1="546.2" y1="167.6" x2="554.1" y2="171.3" stroke="#333" stroke-width="1.6"/>
<path d="M517.2,174.5 A14.6,14.6 0 1,1 542,174.5 C539.5,178 537.7,180.5 537.7,185.3 L521.5,185.3 C521.5,180.5 519.7,178 517.2,174.5 Z" fill="#f8b42b"/>
<path d="M524,153.2 A14.6,14.6 0 0,0 517.2,174.5 C519.7,178 521.5,180.5 521.5,185.3 L524,185.3 C523,181 522,178 520.5,174 C517.5,166 519,158 524,153.2 Z" fill="#eb9f27"/>
<ellipse cx="534.2" cy="156.9" rx="4.9" ry="2.9" transform="rotate(25 534.2 156.9)" fill="#fff3d6"/>
<polyline points="524.2,185 522.8,173.8 525.3,171 527.3,173.8 529.6,170.8 531.9,173.8 533.9,171 536.4,173.8 535,185" fill="none" stroke="#fcd68a" stroke-width="0.9"/>
<polyline points="526.5,185 526,174.5 M532.7,185 533.2,174.5" fill="none" stroke="#fcd68a" stroke-width="0.7"/>
<path d="M526.5,185 L526,174 M532.7,185 L533.2,174" stroke="#fcd68a" stroke-width="0.7"/>
<rect x="519.8" y="185.1" width="18.40" height="8.30" fill="#3a3a3a" rx="0.8"/>
<rect x="518.8" y="186.3" width="20.40" height="1.20" fill="#3a3a3a" rx="0.5"/>
<rect x="518.8" y="188.9" width="20.40" height="1.20" fill="#3a3a3a" rx="0.5"/>
<rect x="518.8" y="191.5" width="20.40" height="1.20" fill="#3a3a3a" rx="0.5"/>
<rect x="498.4" y="267" width="37.60" height="29.00" fill="#f2a81d" />
<ellipse cx="517.2" cy="296" rx="18.8" ry="5.7" fill="#f2a81d"/>
<path d="M498.4,272.0 A18.8,5.7 0 0,0 536,272.0" fill="none" stroke="#f8c552" stroke-width="0.7"/>
<path d="M498.4,275.4 A18.8,5.7 0 0,0 536,275.4" fill="none" stroke="#f8c552" stroke-width="0.7"/>
<path d="M498.4,278.8 A18.8,5.7 0 0,0 536,278.8" fill="none" stroke="#f8c552" stroke-width="0.7"/>
<path d="M498.4,282.2 A18.8,5.7 0 0,0 536,282.2" fill="none" stroke="#f8c552" stroke-width="0.7"/>
<path d="M498.4,285.6 A18.8,5.7 0 0,0 536,285.6" fill="none" stroke="#f8c552" stroke-width="0.7"/>
<path d="M498.4,289.0 A18.8,5.7 0 0,0 536,289.0" fill="none" stroke="#f8c552" stroke-width="0.7"/>
<path d="M498.4,292.4 A18.8,5.7 0 0,0 536,292.4" fill="none" stroke="#f8c552" stroke-width="0.7"/>
<path d="M498.4,295.8 A18.8,5.7 0 0,0 536,295.8" fill="none" stroke="#f8c552" stroke-width="0.7"/>
<ellipse cx="517.2" cy="267" rx="18.8" ry="6.2" fill="#f3ae2a"/>
<ellipse cx="517.2" cy="266.5" rx="15.5" ry="4.8" fill="#f9d283"/>
<text transform="translate(517.2,269.6) scale(1.2,0.62) rotate(-15)" x="0" y="0" font-size="10" font-weight="bold" fill="#f2b340" text-anchor="middle" font-family="Liberation Sans">$</text>
<rect x="250.1" y="308.8" width="393.80" height="4.20" fill="#f3f000" />
<rect x="250.1" y="313" width="393.80" height="46.60" fill="#efd28b" />
<rect x="643.9" y="313.2" width="11.30" height="46.30" fill="#f2d5cf" />
<g font-size="41.7" font-weight="bold" fill="#c4a597" font-family="Liberation Sans"><text transform="translate(249.78,349) scale(0.849,1)">T</text><text transform="translate(270.98,349) scale(0.660,1)">E</text><text transform="translate(289.01,349) scale(0.722,1)">X</text><text transform="translate(311.37,349) scale(0.920,1)">T</text><text transform="translate(346.77,349) scale(0.867,1)">I</text><text transform="translate(358.60,349) scale(0.832,1)">S</text><text transform="translate(393.76,349) scale(0.800,1)">H</text><text transform="translate(422.21,349) scale(0.920,1)">I</text><text transform="translate(433.78,349) scale(0.833,1)">G</text><text transform="translate(461.94,349) scale(0.878,1)">H</text><text transform="translate(489.55,349) scale(0.734,1)">L</text><text transform="translate(509.16,349) scale(0.920,1)">I</text><text transform="translate(521.63,349) scale(0.865,1)">G</text><text transform="translate(549.35,349) scale(0.920,1)">H</text><text transform="translate(577.22,349) scale(0.920,1)">T</text><text transform="translate(602.81,349) scale(0.675,1)">E</text><text transform="translate(622.92,349) scale(0.672,1)">D</text></g>
<rect x="193.3" y="310.6" width="507.1" height="52" fill="none" stroke="#bdbdbd" stroke-width="0.7"/>
<line x1="447.3" y1="303.5" x2="447.3" y2="310.6" stroke="#9a9a9a" stroke-width="0.7"/>
<circle cx="193.3" cy="310.6" r="1.9" fill="#fff" stroke="#9a9a9a" stroke-width="0.5"/>
<circle cx="700.4" cy="310.6" r="1.9" fill="#fff" stroke="#9a9a9a" stroke-width="0.5"/>
<circle cx="193.3" cy="362.6" r="1.9" fill="#fff" stroke="#9a9a9a" stroke-width="0.5"/>
<circle cx="700.4" cy="362.6" r="1.9" fill="#fff" stroke="#9a9a9a" stroke-width="0.5"/>
<circle cx="447.3" cy="362.6" r="1.9" fill="#fff" stroke="#9a9a9a" stroke-width="0.5"/>
<rect x="191.70000000000002" y="335.4" width="3.20" height="3.20" fill="#fff" stroke="#8a8a8a" stroke-width="0.6"/>
<rect x="698.8" y="335.4" width="3.20" height="3.20" fill="#fff" stroke="#8a8a8a" stroke-width="0.6"/>
<rect x="445.7" y="309.0" width="3.20" height="3.20" fill="#fff" stroke="#8a8a8a" stroke-width="0.6"/>
<circle cx="447.3" cy="301.1" r="2.4" fill="#fff" stroke="#8a8a8a" stroke-width="0.5"/><path d="M448.5,300 A1.3,1.3 0 1 0 448.6,301.6" fill="none" stroke="#777" stroke-width="0.5"/>
</g>
<rect x="232.3" y="42.5" width="81" height="78.8" rx="2.5" fill="#f1f1f1" stroke="#d9d9d9" stroke-width="0.5" filter="url(#sh)"/>
<rect x="236.8" y="49" width="72" height="8.2" fill="#fff"/>
<text x="272.8" y="55.3" font-size="5.9" fill="#222" stroke="#222" stroke-width="0.12" font-weight="normal" text-anchor="middle" >No Colour</text>
<rect x="236.90" y="60.00" width="13.3" height="13.6" fill="#ffff00" stroke="#cfcfcf" stroke-width="0.4"/>
<rect x="251.50" y="60.00" width="13.3" height="13.6" fill="#00ff00" stroke="#cfcfcf" stroke-width="0.4"/>
<rect x="266.10" y="60.00" width="13.3" height="13.6" fill="#00ffff" stroke="#cfcfcf" stroke-width="0.4"/>
<rect x="280.70" y="60.00" width="13.3" height="13.6" fill="#ff00ff" stroke="#cfcfcf" stroke-width="0.4"/>
<rect x="295.30" y="60.00" width="13.3" height="13.6" fill="#0000ff" stroke="#cfcfcf" stroke-width="0.4"/>
<rect x="236.90" y="74.45" width="13.3" height="13.6" fill="#ff0000" stroke="#cfcfcf" stroke-width="0.4"/>
<rect x="251.50" y="74.45" width="13.3" height="13.6" fill="#000080" stroke="#cfcfcf" stroke-width="0.4"/>
<rect x="266.10" y="74.45" width="13.3" height="13.6" fill="#008080" stroke="#cfcfcf" stroke-width="0.4"/>
<rect x="280.70" y="74.45" width="13.3" height="13.6" fill="#008000" stroke="#cfcfcf" stroke-width="0.4"/>
<rect x="295.30" y="74.45" width="13.3" height="13.6" fill="#800080" stroke="#cfcfcf" stroke-width="0.4"/>
<rect x="236.90" y="88.90" width="13.3" height="13.6" fill="#800000" stroke="#cfcfcf" stroke-width="0.4"/>
<rect x="251.50" y="88.90" width="13.3" height="13.6" fill="#808000" stroke="#cfcfcf" stroke-width="0.4"/>
<rect x="266.10" y="88.90" width="13.3" height="13.6" fill="#808080" stroke="#cfcfcf" stroke-width="0.4"/>
<rect x="280.70" y="88.90" width="13.3" height="13.6" fill="#c0c0c0" stroke="#cfcfcf" stroke-width="0.4"/>
<rect x="295.30" y="88.90" width="13.3" height="13.6" fill="#000000" stroke="#cfcfcf" stroke-width="0.4"/>
<rect x="236.6" y="59.7" width="13.9" height="14.2" fill="none" stroke="#a0a0a0" stroke-width="0.7"/>
<line x1="233" y1="108.2" x2="313" y2="108.2" stroke="#dcdcdc" stroke-width="0.6"/>
<text x="240.7" y="117.4" font-size="6.4" fill="#b3b3b3" stroke="#b3b3b3" stroke-width="0.12" font-weight="normal" text-anchor="start" >Stop Highlighting</text>
<rect x="242.4" y="76.5" width="19.3" height="7.9" rx="1" fill="#e9d4e1" stroke="#d0c0c8" stroke-width="0.3"/>
<text x="252" y="82.5" font-size="5.3" fill="#555" stroke="#555" stroke-width="0.12" font-weight="normal" text-anchor="middle" >Yellow</text>
<line x1="388" y1="91.5" x2="259" y2="44" stroke="#f5251c" stroke-width="2.6"/><polygon points="252.1,41.1 264.2,40.3 259.9,49.8" fill="#f5251c"/>
</svg>
</body></html>
